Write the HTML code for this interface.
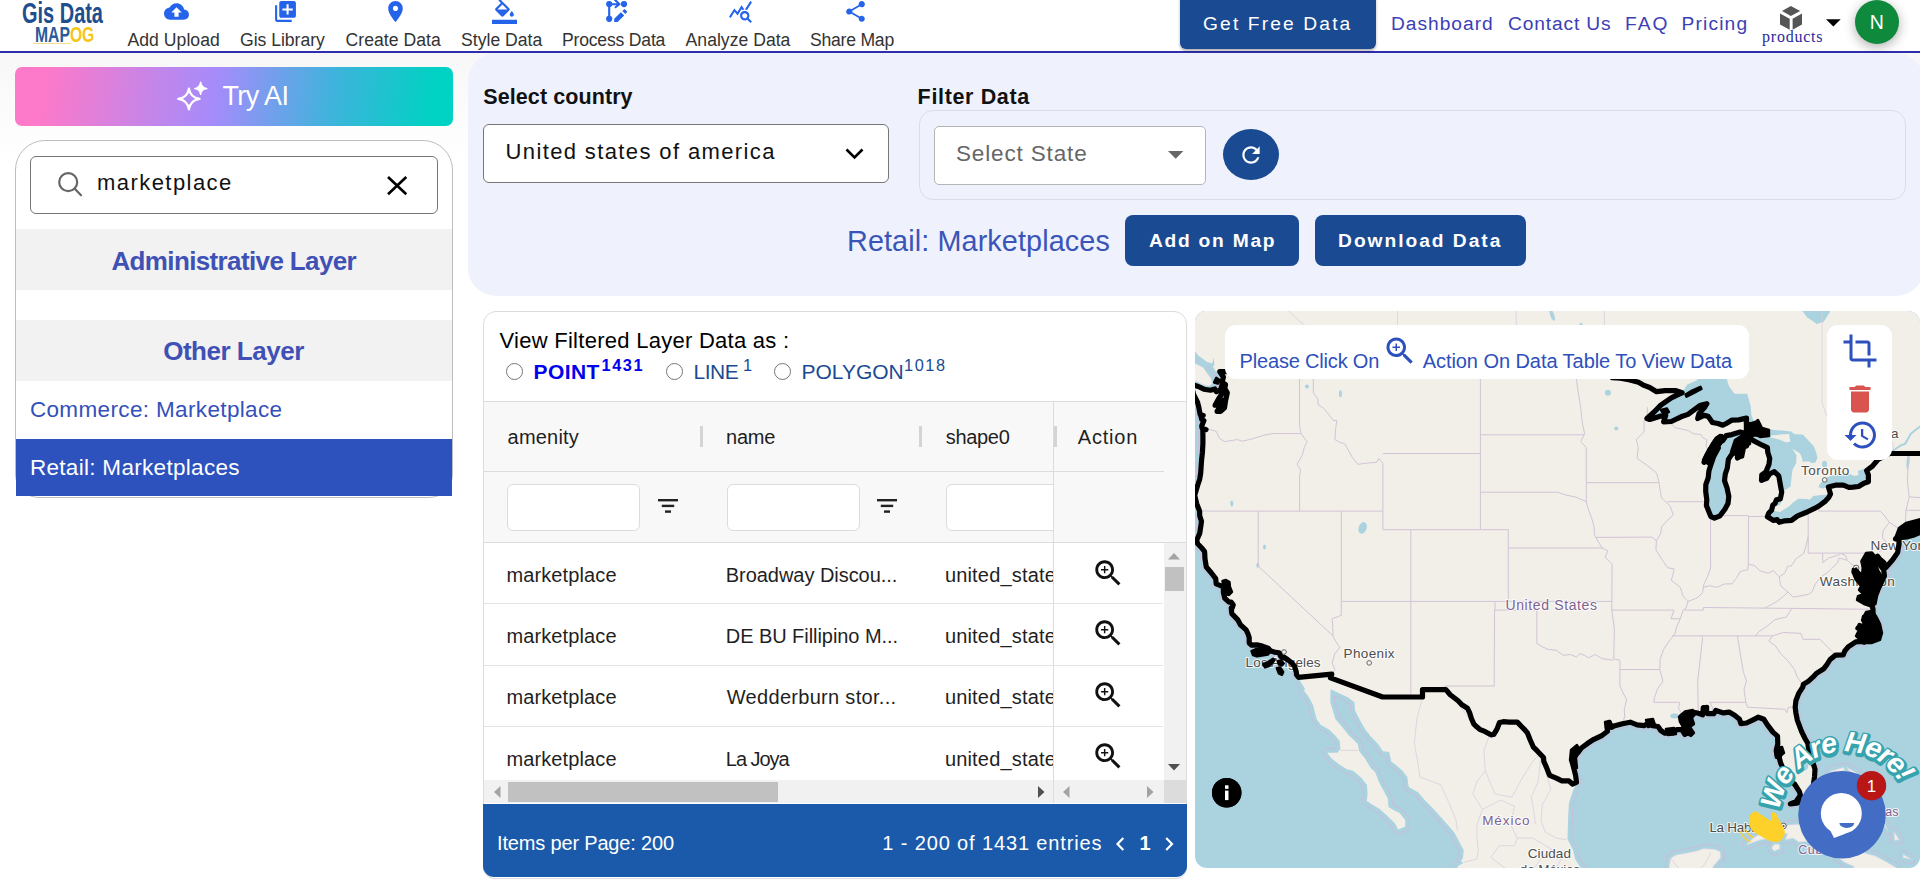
<!DOCTYPE html><html><head><meta charset="utf-8"><title>GIS Data</title><style>
html,body{margin:0;padding:0;background:#fff;}
#pgbg{position:absolute;left:0;top:53px;width:1920px;height:110px;background:linear-gradient(180deg,#f7f7f8 0%,#fbfbfb 45%,#fff 100%)}
body{width:1920px;height:886px;overflow:hidden;position:relative;font-family:"Liberation Sans",sans-serif;}
.t{position:absolute;white-space:nowrap;line-height:1;}
.ic{position:absolute;display:block;overflow:visible}
#hdr{position:absolute;left:0;top:0;width:1920px;height:51px;background:#fff}
#hline{position:absolute;left:0;top:51px;width:1920px;height:2px;background:#2e2fae}
.logo1{position:absolute;left:22.4px;top:-1.3px;font:bold 28.6px/28.6px "Liberation Sans",sans-serif;color:#1f4e8f;transform-origin:0 0;transform:scaleX(.698);white-space:nowrap}
.logo2{position:absolute;left:35.3px;top:24.2px;font:bold 21.6px/21.6px "Liberation Sans",sans-serif;color:#2a5a9a;transform-origin:0 0;transform:scaleX(.727);white-space:nowrap}
.logo2 b{color:#f5c518}
.logoline{position:absolute;left:33px;top:43px;width:38px;height:1px;background:#f3dc8a}
.btn{position:absolute;background:#1a4b92}
.avatar{position:absolute;left:1855px;top:-0.5px;width:44px;height:44px;border-radius:50%;background:#0f8a3c;box-shadow:0 3px 12px rgba(0,0,0,.32)}
.tryai{position:absolute;left:15px;top:67px;width:438px;height:59px;border-radius:7px;background:linear-gradient(97deg,#fd79c9 0%,#fd79c9 7%,#a48cfb 46%,#3fb3dc 72%,#00d2c3 95%,#00d2c3 100%)}
.side{position:absolute;left:15px;top:140px;width:436px;height:355.5px;border:1px solid #bdbdbd;border-radius:30px 30px 24px 24px;background:#fff;overflow:hidden}
.srch{position:absolute;left:14px;top:15px;width:406px;height:56px;border:1px solid #767676;border-radius:6px}
.band{position:absolute;left:0;width:436px;background:#f2f2f2}
.sel{position:absolute;width:436px;background:#2d52be}
.fpanel{position:absolute;left:468px;top:53px;width:1456px;height:243px;border-radius:28px;background:#eff2fc}
.selbox{position:absolute;left:483px;top:124px;width:404px;height:57px;border:1px solid #767676;border-radius:6px;background:#fff}
.fbox{position:absolute;left:919px;top:110px;width:985px;height:88px;border:1px solid #dcdde6;border-radius:14px}
.stbox{position:absolute;left:934px;top:125.5px;width:270px;height:57px;border:1px solid #b5b5b5;border-radius:5px;background:#fff}
.rbtn{position:absolute;left:1223px;top:129px;width:56px;height:51px;border-radius:50%;background:#1a4b92}
.tpanel{position:absolute;left:483px;top:311px;width:702px;height:566px;border:1px solid #dcdcdc;border-radius:13px 13px 11px 11px;background:#fff;overflow:hidden}
.hl{position:absolute;height:1px;background:#dcdcdc}
.radio{position:absolute;width:15px;height:15px;border:1.3px solid #767676;border-radius:50%;background:#fff}
</style></head><body><div id="pgbg"></div><div id="hdr"></div><div id="hline"></div>
<div class="logo1">Gis Data</div><div class="logo2">MAP<b>OG</b></div><div class="logoline"></div>
<svg class="ic" style="left:164px;top:-1.2px" width="25" height="25" viewBox="0 0 24 24" fill="#2563eb" ><path d="M19.35 10.04C18.67 6.59 15.64 4 12 4 9.11 4 6.6 5.64 5.35 8.04 2.34 8.36 0 10.91 0 14c0 3.31 2.69 6 6 6h13c2.76 0 5-2.24 5-5 0-2.64-2.05-4.78-4.65-4.96zM14 13v4h-4v-4H7l5-5 5 5h-3z"/></svg>
<svg class="ic" style="left:272.9px;top:-1.2px" width="25" height="25" viewBox="0 0 24 24" fill="#2563eb" ><path d="M4 6H2v14c0 1.1.9 2 2 2h14v-2H4V6zm16-4H8c-1.1 0-2 .9-2 2v12c0 1.1.9 2 2 2h12c1.1 0 2-.9 2-2V4c0-1.1-.9-2-2-2zm-1 9h-4v4h-2v-4H9V9h4V5h2v4h4v2z"/></svg>
<svg class="ic" style="left:382.8px;top:-1.2px" width="25" height="25" viewBox="0 0 24 24" fill="#2563eb" ><path d="M12 2C8.13 2 5 5.13 5 9c0 5.25 7 13 7 13s7-7.75 7-13c0-3.87-3.13-7-7-7zm0 9.5c-1.38 0-2.5-1.12-2.5-2.5s1.12-2.5 2.5-2.5 2.5 1.12 2.5 2.5-1.12 2.5-2.5 2.5z"/></svg>
<svg class="ic" style="left:492px;top:-1.2px" width="25" height="25" viewBox="0 0 24 24" fill="#2563eb" ><path d="M16.56 8.94L7.62 0 6.21 1.41l2.38 2.38-5.15 5.15c-.59.59-.59 1.54 0 2.12l5.5 5.5c.29.29.68.44 1.06.44s.77-.15 1.06-.44l5.5-5.5c.59-.58.59-1.53 0-2.12zM5.21 10L10 5.21 14.79 10H5.21zM19 11.5s-2 2.17-2 3.5c0 1.1.9 2 2 2s2-.9 2-2c0-1.33-2-3.5-2-3.5zM0 20h24v4H0z"/></svg>
<svg class="ic" style="left:596px;top:-2px" width="40" height="28" viewBox="596 -2 40 28" fill="#2563eb"><circle cx="609.2" cy="4.1" r="3.1"/><circle cx="624" cy="4.1" r="3.1"/><circle cx="609.2" cy="18.8" r="3.1"/><path d="M609.2 4.1V18.8M609.2 4.2H618.6M614.6 -0.6L619.4 4.2L614.9 7.8" fill="none" stroke="#2563eb" stroke-width="2.1"/><path d="M614.2 21.9V18.8L620.9 12.2L624.2 15.4L617.6 21.9Z"/><path d="M622.3 11.0L624.6 8.9L627.3 11.7L625.3 14.0Z"/></svg>

<svg class="ic" style="left:728.4px;top:-1.2px" width="25" height="25" viewBox="0 0 24 24" fill="#2563eb" ><path d="M19.88 18.47c.44-.7.7-1.51.7-2.39 0-2.49-2.01-4.5-4.5-4.5s-4.5 2.01-4.5 4.5 2.01 4.5 4.49 4.5c.88 0 1.7-.26 2.39-.7L21.58 23 23 21.58l-3.12-3.11zm-3.8.11c-1.38 0-2.5-1.12-2.5-2.5s1.12-2.5 2.5-2.5 2.5 1.12 2.5 2.5-1.12 2.5-2.5 2.5zm-.36-8.5c-.74.02-1.45.18-2.1.45l-.55-.83-3.8 6.18-3.01-3.52-3.63 5.81L1 17l5-8 3 3.5L13 6l2.72 4.08zm2.59.5c-.64-.28-1.33-.45-2.05-.49L21.38 2 23 3.18l-4.69 7.4z"/></svg>
<svg class="ic" style="left:842.5px;top:-1.2px" width="25" height="25" viewBox="0 0 24 24" fill="#2563eb" ><path d="M18 16.08c-.76 0-1.44.3-1.96.77L8.91 12.7c.05-.23.09-.46.09-.7s-.04-.47-.09-.7l7.05-4.11c.54.5 1.25.81 2.04.81 1.66 0 3-1.34 3-3s-1.34-3-3-3-3 1.34-3 3c0 .24.04.47.09.7L8.04 9.81C7.5 9.31 6.79 9 6 9c-1.66 0-3 1.34-3 3s1.34 3 3 3c.79 0 1.5-.31 2.04-.81l7.12 4.16c-.05.21-.08.43-.08.65 0 1.61 1.31 2.92 2.92 2.92 1.61 0 2.92-1.31 2.92-2.92s-1.31-2.92-2.92-2.92z"/></svg>
<span class="t" style="left:127.50px;top:31.90px;font-size:17.6px;color:#333333;font-weight:normal;font-family:'Liberation Sans', sans-serif;letter-spacing:0.038px;">Add Upload</span>
<span class="t" style="left:240.00px;top:31.90px;font-size:17.6px;color:#333333;font-weight:normal;font-family:'Liberation Sans', sans-serif;letter-spacing:-0.026px;">Gis Library</span>
<span class="t" style="left:345.60px;top:31.90px;font-size:17.6px;color:#333333;font-weight:normal;font-family:'Liberation Sans', sans-serif;letter-spacing:0.033px;">Create Data</span>
<span class="t" style="left:461.00px;top:31.90px;font-size:17.6px;color:#333333;font-weight:normal;font-family:'Liberation Sans', sans-serif;letter-spacing:0.013px;">Style Data</span>
<span class="t" style="left:562.00px;top:31.90px;font-size:17.6px;color:#333333;font-weight:normal;font-family:'Liberation Sans', sans-serif;letter-spacing:-0.202px;">Process Data</span>
<span class="t" style="left:685.60px;top:31.90px;font-size:17.6px;color:#333333;font-weight:normal;font-family:'Liberation Sans', sans-serif;letter-spacing:0.013px;">Analyze Data</span>
<span class="t" style="left:810.00px;top:31.90px;font-size:17.6px;color:#333333;font-weight:normal;font-family:'Liberation Sans', sans-serif;letter-spacing:-0.235px;">Share Map</span>
<div class="btn" style="left:1180px;top:-6px;width:196px;height:55px;border-radius:6px;box-shadow:0 2px 3px rgba(0,0,0,.3)"></div>
<span class="t" style="left:1203.00px;top:13.75px;font-size:19.2px;color:#fff;font-weight:normal;font-family:'Liberation Sans', sans-serif;letter-spacing:2.142px;">Get Free Data</span>
<span class="t" style="left:1391.00px;top:13.75px;font-size:19.2px;color:#3b40b5;font-weight:normal;font-family:'Liberation Sans', sans-serif;letter-spacing:0.976px;">Dashboard</span>
<span class="t" style="left:1508.00px;top:13.75px;font-size:19.2px;color:#3b40b5;font-weight:normal;font-family:'Liberation Sans', sans-serif;letter-spacing:0.854px;">Contact Us</span>
<span class="t" style="left:1625.00px;top:13.75px;font-size:19.2px;color:#3b40b5;font-weight:normal;font-family:'Liberation Sans', sans-serif;letter-spacing:2.020px;">FAQ</span>
<span class="t" style="left:1681.60px;top:13.75px;font-size:19.2px;color:#3b40b5;font-weight:normal;font-family:'Liberation Sans', sans-serif;letter-spacing:1.137px;">Pricing</span>
<svg class="ic" style="left:1778px;top:4px" width="26" height="28" viewBox="1778 4 26 28" fill="#555"><path d="M1790.8 5.9L1800.2 10.9L1790.8 15.9L1782 10.9Z"/><path d="M1780 13.4L1789.7 18.8V29.7L1780 24.4Z"/><path d="M1792.6 18.8L1802 13.4V24.4L1792.6 29.7Z"/></svg>

<span class="t" style="left:1762.00px;top:29.40px;font-size:16px;color:#2a2a9c;font-weight:normal;font-family:'Liberation Serif', serif;letter-spacing:0.775px;">products</span>
<svg class="ic" style="left:1826px;top:19.1px" width="14.7" height="7.9" viewBox="0 0 10 5"><path d="M0 0h10L5 5z" fill="#000"/></svg>
<div class="avatar"></div>
<span class="t" style="left:1869.70px;top:13.39px;font-size:19.5px;color:#fff;font-weight:normal;font-family:'Liberation Sans', sans-serif;letter-spacing:0.000px;">N</span>
<div class="tryai"></div>
<svg class="ic" style="left:174px;top:78px" width="40" height="36" viewBox="174 78 40 36"><path d="M188.900 88.600 Q190.300 97.600 199.600 98.900 Q190.300 100.300 188.900 109.400 Q187.600 100.300 178.300 98.900 Q187.600 97.600 188.900 88.600Z" fill="none" stroke="#fff" stroke-width="2.3" stroke-linejoin="round"/><path d="M200.600 82.100 Q201.300 87.900 206.900 88.600 Q201.300 89.300 200.600 94.300 Q199.900 89.300 194.700 88.600 Q199.900 87.900 200.600 82.100Z" fill="#fff" stroke="#fff" stroke-width="1.4" stroke-linejoin="round"/></svg>

<span class="t" style="left:222.50px;top:83.04px;font-size:27px;color:#fff;font-weight:normal;font-family:'Liberation Sans', sans-serif;letter-spacing:-0.618px;">Try AI</span>
<div class="side"><div class="srch"></div><div class="band" style="top:88px;height:61px"></div><div class="band" style="top:179px;height:60.5px"></div></div><div class="sel" style="left:16px;top:439px;height:57px"></div>
<svg class="ic" style="left:56px;top:170px" width="28" height="28" viewBox="0 0 28 28" fill="none" stroke="#666" stroke-width="2.2"><circle cx="12.2" cy="12.2" r="9"/><path d="M18.8 18.8L25 25.3" stroke-linecap="round"/></svg>
<span class="t" style="left:97.00px;top:171.98px;font-size:22px;color:#111;font-weight:normal;font-family:'Liberation Sans', sans-serif;letter-spacing:1.441px;">marketplace</span>
<svg class="ic" style="left:386.7px;top:176px" width="20.3" height="19.3" viewBox="0 0 20 19" fill="none" stroke="#000" stroke-width="2.6"><path d="M1 1L19 18M19 1L1 18"/></svg>
<span class="t" style="left:111.40px;top:247.79px;font-size:26px;color:#3f51b5;font-weight:bold;font-family:'Liberation Sans', sans-serif;letter-spacing:-0.626px;">Administrative Layer</span>
<span class="t" style="left:163.20px;top:337.79px;font-size:26px;color:#3f51b5;font-weight:bold;font-family:'Liberation Sans', sans-serif;letter-spacing:-0.483px;">Other Layer</span>
<span class="t" style="left:29.90px;top:398.55px;font-size:22.5px;color:#3350bb;font-weight:normal;font-family:'Liberation Sans', sans-serif;letter-spacing:0.357px;">Commerce: Marketplace</span>
<span class="t" style="left:29.90px;top:457.45px;font-size:22.5px;color:#fff;font-weight:normal;font-family:'Liberation Sans', sans-serif;letter-spacing:0.306px;">Retail: Marketplaces</span>
<div class="fpanel"></div>
<span class="t" style="left:483.30px;top:86.60px;font-size:21.5px;color:#111;font-weight:bold;font-family:'Liberation Sans', sans-serif;letter-spacing:0.084px;">Select country</span>
<span class="t" style="left:917.60px;top:86.60px;font-size:21.5px;color:#111;font-weight:bold;font-family:'Liberation Sans', sans-serif;letter-spacing:0.652px;">Filter Data</span>
<div class="selbox"></div>
<span class="t" style="left:505.50px;top:141.08px;font-size:22px;color:#111;font-weight:normal;font-family:'Liberation Sans', sans-serif;letter-spacing:1.379px;">United states of america</span>
<svg class="ic" style="left:845px;top:148px" width="19" height="12" viewBox="0 0 19 12" fill="none" stroke="#000" stroke-width="2.6"><path d="M1.5 1.5L9.5 9.5L17.5 1.5"/></svg>
<div class="fbox"></div><div class="stbox"></div>
<span class="t" style="left:956.00px;top:142.75px;font-size:22.5px;color:#666;font-weight:normal;font-family:'Liberation Sans', sans-serif;letter-spacing:0.854px;">Select State</span>
<svg class="ic" style="left:1168.3px;top:151px" width="15.4" height="7.7" viewBox="0 0 10 5"><path d="M0 0h10L5 5z" fill="#666"/></svg>
<div class="rbtn"></div>
<svg class="ic" style="left:1238px;top:141.5px" width="26" height="26" viewBox="0 0 24 24" fill="#fff" ><path d="M17.65 6.35C16.2 4.9 14.21 4 12 4c-4.42 0-7.99 3.58-7.99 8s3.57 8 7.99 8c3.73 0 6.84-2.55 7.73-6h-2.08c-.82 2.33-3.04 4-5.65 4-3.31 0-6-2.69-6-6s2.69-6 6-6c1.66 0 3.14.69 4.22 1.78L13 11h7V4l-2.35 2.35z"/></svg>
<span class="t" style="left:847.00px;top:227.22px;font-size:28.8px;color:#3a55b8;font-weight:normal;font-family:'Liberation Sans', sans-serif;letter-spacing:0.101px;">Retail: Marketplaces</span>
<div class="btn" style="left:1125px;top:215px;width:174px;height:51px;border-radius:8px"></div>
<span class="t" style="left:1149.00px;top:231.45px;font-size:19.2px;color:#fff;font-weight:bold;font-family:'Liberation Sans', sans-serif;letter-spacing:1.749px;">Add on Map</span>
<div class="btn" style="left:1315px;top:215px;width:211px;height:51px;border-radius:8px"></div>
<span class="t" style="left:1338.10px;top:231.45px;font-size:19.2px;color:#fff;font-weight:bold;font-family:'Liberation Sans', sans-serif;letter-spacing:1.974px;">Download Data</span>
<div class="tpanel"></div>
<span class="t" style="left:499.50px;top:330.13px;font-size:22px;color:#000;font-weight:normal;font-family:'Liberation Sans', sans-serif;letter-spacing:0.270px;">View Filtered Layer Data as :</span>
<div class="radio" style="left:506.25px;top:362.5px"></div>
<div class="radio" style="left:665.5px;top:362.5px"></div>
<div class="radio" style="left:773.5px;top:362.5px"></div>
<span class="t" style="left:533.50px;top:360.97px;font-size:21px;color:#0000ee;font-weight:bold;font-family:'Liberation Sans', sans-serif;letter-spacing:0.415px;">POINT</span>
<span class="t" style="left:601.50px;top:357.45px;font-size:16.3px;color:#0000ee;font-weight:bold;font-family:'Liberation Sans', sans-serif;letter-spacing:1.612px;">1431</span>
<span class="t" style="left:693.50px;top:360.97px;font-size:21px;color:#1a4b92;font-weight:normal;font-family:'Liberation Sans', sans-serif;letter-spacing:-0.476px;">LINE</span>
<span class="t" style="left:743.00px;top:357.45px;font-size:16.3px;color:#1a4b92;font-weight:normal;font-family:'Liberation Sans', sans-serif;letter-spacing:0.000px;">1</span>
<span class="t" style="left:801.50px;top:360.97px;font-size:21px;color:#1a4b92;font-weight:normal;font-family:'Liberation Sans', sans-serif;letter-spacing:-0.023px;">POLYGON</span>
<span class="t" style="left:904.00px;top:357.45px;font-size:16.3px;color:#1a4b92;font-weight:normal;font-family:'Liberation Sans', sans-serif;letter-spacing:1.612px;">1018</span>
<div style="position:absolute;left:484px;top:400.5px;width:702px;height:142px;background:#f8f8f8"></div>
<div class="hl" style="left:484px;top:400.5px;width:702px"></div>
<div class="hl" style="left:484px;top:471px;width:680px"></div>
<div class="hl" style="left:484px;top:542px;width:702px"></div>
<div style="position:absolute;left:700px;top:426px;width:2.6px;height:20.5px;background:#d4d4d4"></div>
<div style="position:absolute;left:919.3px;top:426px;width:2.6px;height:20.5px;background:#d4d4d4"></div>
<div style="position:absolute;left:1054px;top:426px;width:3px;height:20.5px;background:#d4d4d4"></div>
<span class="t" style="left:507.60px;top:427.07px;font-size:20px;color:#1f1f1f;font-weight:normal;font-family:'Liberation Sans', sans-serif;letter-spacing:0.195px;">amenity</span>
<span class="t" style="left:726.10px;top:427.07px;font-size:20px;color:#1f1f1f;font-weight:normal;font-family:'Liberation Sans', sans-serif;letter-spacing:-0.235px;">name</span>
<span class="t" style="left:945.70px;top:427.07px;font-size:20px;color:#1f1f1f;font-weight:normal;font-family:'Liberation Sans', sans-serif;letter-spacing:-0.298px;">shape0</span>
<span class="t" style="left:1077.80px;top:427.07px;font-size:20px;color:#1f1f1f;font-weight:normal;font-family:'Liberation Sans', sans-serif;letter-spacing:0.787px;">Action</span>
<div style="position:absolute;left:507px;top:484px;width:131px;height:44.5px;border:1px solid #dcdcdc;border-radius:6px;background:#fff"></div>
<div style="position:absolute;left:726.5px;top:484px;width:131px;height:44.5px;border:1px solid #dcdcdc;border-radius:6px;background:#fff"></div>
<div style="position:absolute;left:946px;top:484px;width:120px;height:44.5px;border:1px solid #dcdcdc;border-radius:6px;background:#fff"></div>
<div style="position:absolute;left:1053px;top:472px;width:133px;height:70px;background:#f8f8f8"></div>
<svg class="ic" style="left:658px;top:498.8px" width="20" height="14" viewBox="0 0 20 14" fill="#222"><rect x="0" y="0" width="20" height="2.4"/><rect x="3.8" y="5.7" width="12.4" height="2.4"/><rect x="7" y="11.4" width="6" height="2.4"/></svg>
<svg class="ic" style="left:877px;top:498.8px" width="20" height="14" viewBox="0 0 20 14" fill="#222"><rect x="0" y="0" width="20" height="2.4"/><rect x="3.8" y="5.7" width="12.4" height="2.4"/><rect x="7" y="11.4" width="6" height="2.4"/></svg>
<span class="t" style="left:506.40px;top:565.07px;font-size:20px;color:#1f1f1f;font-weight:normal;font-family:'Liberation Sans', sans-serif;letter-spacing:0.129px;">marketplace</span>
<span class="t" style="left:725.80px;top:565.07px;font-size:20px;color:#1f1f1f;font-weight:normal;font-family:'Liberation Sans', sans-serif;letter-spacing:-0.043px;">Broadway Discou...</span>
<span class="t" style="left:944.90px;top:565.07px;font-size:20px;color:#1f1f1f;font-weight:normal;font-family:'Liberation Sans', sans-serif;letter-spacing:0.177px;">united_states</span>
<div class="hl" style="left:484px;top:603px;width:679px;background:#e4e4e4"></div>
<span class="t" style="left:506.40px;top:625.57px;font-size:20px;color:#1f1f1f;font-weight:normal;font-family:'Liberation Sans', sans-serif;letter-spacing:0.129px;">marketplace</span>
<span class="t" style="left:725.80px;top:625.57px;font-size:20px;color:#1f1f1f;font-weight:normal;font-family:'Liberation Sans', sans-serif;letter-spacing:-0.059px;">DE BU Fillipino M...</span>
<span class="t" style="left:944.90px;top:625.57px;font-size:20px;color:#1f1f1f;font-weight:normal;font-family:'Liberation Sans', sans-serif;letter-spacing:0.177px;">united_states</span>
<div class="hl" style="left:484px;top:664.5px;width:679px;background:#e4e4e4"></div>
<span class="t" style="left:506.40px;top:687.07px;font-size:20px;color:#1f1f1f;font-weight:normal;font-family:'Liberation Sans', sans-serif;letter-spacing:0.129px;">marketplace</span>
<span class="t" style="left:726.80px;top:687.07px;font-size:20px;color:#1f1f1f;font-weight:normal;font-family:'Liberation Sans', sans-serif;letter-spacing:0.300px;">Wedderburn stor...</span>
<span class="t" style="left:944.90px;top:687.07px;font-size:20px;color:#1f1f1f;font-weight:normal;font-family:'Liberation Sans', sans-serif;letter-spacing:0.177px;">united_states</span>
<div class="hl" style="left:484px;top:726px;width:679px;background:#e4e4e4"></div>
<span class="t" style="left:506.40px;top:748.57px;font-size:20px;color:#1f1f1f;font-weight:normal;font-family:'Liberation Sans', sans-serif;letter-spacing:0.129px;">marketplace</span>
<span class="t" style="left:725.80px;top:748.57px;font-size:20px;color:#1f1f1f;font-weight:normal;font-family:'Liberation Sans', sans-serif;letter-spacing:-1.038px;">La Joya</span>
<span class="t" style="left:944.90px;top:748.57px;font-size:20px;color:#1f1f1f;font-weight:normal;font-family:'Liberation Sans', sans-serif;letter-spacing:0.177px;">united_states</span>
<div style="position:absolute;left:1053px;top:543px;width:110px;height:237px;background:#fff;border-left:1px solid #dcdcdc"></div>
<div style="position:absolute;left:1053px;top:401px;width:1px;height:402px;background:#dcdcdc"></div>
<svg class="ic" style="left:1090.7px;top:555.7px" width="34.5" height="34.5" viewBox="0 0 24 24" fill="#111" ><path d="M15.5 14h-.79l-.28-.27C15.41 12.59 16 11.11 16 9.5 16 5.91 13.09 3 9.5 3S3 5.91 3 9.5 5.91 16 9.5 16c1.61 0 3.09-.59 4.23-1.57l.27.28v.79l5 4.99L20.49 19l-4.99-5zm-6 0C7.01 14 5 11.99 5 9.5S7.01 5 9.5 5 14 7.01 14 9.5 11.99 14 9.5 14zM12 10h-2v2H9v-2H7V9h2V7h1v2h2v1z"/></svg>
<div class="hl" style="left:1054px;top:603px;width:109px;background:#e4e4e4"></div>
<svg class="ic" style="left:1090.7px;top:616.2px" width="34.5" height="34.5" viewBox="0 0 24 24" fill="#111" ><path d="M15.5 14h-.79l-.28-.27C15.41 12.59 16 11.11 16 9.5 16 5.91 13.09 3 9.5 3S3 5.91 3 9.5 5.91 16 9.5 16c1.61 0 3.09-.59 4.23-1.57l.27.28v.79l5 4.99L20.49 19l-4.99-5zm-6 0C7.01 14 5 11.99 5 9.5S7.01 5 9.5 5 14 7.01 14 9.5 11.99 14 9.5 14zM12 10h-2v2H9v-2H7V9h2V7h1v2h2v1z"/></svg>
<div class="hl" style="left:1054px;top:664.5px;width:109px;background:#e4e4e4"></div>
<svg class="ic" style="left:1090.7px;top:677.7px" width="34.5" height="34.5" viewBox="0 0 24 24" fill="#111" ><path d="M15.5 14h-.79l-.28-.27C15.41 12.59 16 11.11 16 9.5 16 5.91 13.09 3 9.5 3S3 5.91 3 9.5 5.91 16 9.5 16c1.61 0 3.09-.59 4.23-1.57l.27.28v.79l5 4.99L20.49 19l-4.99-5zm-6 0C7.01 14 5 11.99 5 9.5S7.01 5 9.5 5 14 7.01 14 9.5 11.99 14 9.5 14zM12 10h-2v2H9v-2H7V9h2V7h1v2h2v1z"/></svg>
<div class="hl" style="left:1054px;top:726px;width:109px;background:#e4e4e4"></div>
<svg class="ic" style="left:1090.7px;top:739.2px" width="34.5" height="34.5" viewBox="0 0 24 24" fill="#111" ><path d="M15.5 14h-.79l-.28-.27C15.41 12.59 16 11.11 16 9.5 16 5.91 13.09 3 9.5 3S3 5.91 3 9.5 5.91 16 9.5 16c1.61 0 3.09-.59 4.23-1.57l.27.28v.79l5 4.99L20.49 19l-4.99-5zm-6 0C7.01 14 5 11.99 5 9.5S7.01 5 9.5 5 14 7.01 14 9.5 11.99 14 9.5 14zM12 10h-2v2H9v-2H7V9h2V7h1v2h2v1z"/></svg>
<div style="position:absolute;left:1163.5px;top:543px;width:22.5px;height:237.5px;background:#f1f1f1"></div>
<div style="position:absolute;left:1165px;top:567px;width:19px;height:23.5px;background:#c1c1c1"></div>
<svg class="ic" style="left:1168px;top:552.5px" width="12" height="6.5" viewBox="0 0 12 6.5"><path d="M0 6.5L6 0L12 6.5z" fill="#a3a3a3"/></svg>
<svg class="ic" style="left:1168px;top:763.5px" width="12" height="6.5" viewBox="0 0 12 6.5"><path d="M0 0L6 6.5L12 0z" fill="#505050"/></svg>
<div style="position:absolute;left:484px;top:780.3px;width:702px;height:23.2px;background:#f1f1f1"></div>
<div style="position:absolute;left:1163.5px;top:780.3px;width:22.5px;height:23.2px;background:#dcdcdc"></div>
<div style="position:absolute;left:1053px;top:780.3px;width:1px;height:23.2px;background:#dcdcdc"></div>
<div style="position:absolute;left:508px;top:782px;width:270px;height:19.5px;background:#c1c1c1"></div>
<svg class="ic" style="left:493.5px;top:785.5px" width="6.5" height="12" viewBox="0 0 6.5 12"><path d="M6.5 0L0 6L6.5 12z" fill="#a3a3a3"/></svg>
<svg class="ic" style="left:1037.5px;top:785.5px" width="6.5" height="12" viewBox="0 0 6.5 12"><path d="M0 0L6.5 6L0 12z" fill="#505050"/></svg>
<svg class="ic" style="left:1063px;top:785.5px" width="6.5" height="12" viewBox="0 0 6.5 12"><path d="M6.5 0L0 6L6.5 12z" fill="#a3a3a3"/></svg>
<svg class="ic" style="left:1146.5px;top:785.5px" width="6.5" height="12" viewBox="0 0 6.5 12"><path d="M0 0L6.5 6L0 12z" fill="#a3a3a3"/></svg>
<div style="position:absolute;left:483px;top:803.5px;width:704px;height:73.5px;background:#1b5aaa;border-radius:0 0 11px 11px"></div>
<span class="t" style="left:497.10px;top:832.67px;font-size:20px;color:#fff;font-weight:normal;font-family:'Liberation Sans', sans-serif;letter-spacing:-0.177px;">Items per Page: 200</span>
<span class="t" style="left:882.30px;top:832.67px;font-size:20px;color:#fff;font-weight:normal;font-family:'Liberation Sans', sans-serif;letter-spacing:0.871px;">1 - 200 of 1431 entries</span>
<svg class="ic" style="left:1115.5px;top:837px" width="8.5" height="14" viewBox="0 0 8.5 14" fill="none" stroke="#fff" stroke-width="2.2"><path d="M7.3 1L1.5 7L7.3 13"/></svg>
<span class="t" style="left:1139.50px;top:832.67px;font-size:20px;color:#fff;font-weight:bold;font-family:'Liberation Sans', sans-serif;letter-spacing:0.000px;">1</span>
<svg class="ic" style="left:1164.5px;top:837px" width="8.5" height="14" viewBox="0 0 8.5 14" fill="none" stroke="#fff" stroke-width="2.2"><path d="M1.2 1L7 7L1.2 13"/></svg>
<svg class="ic" id="map" style="left:1195px;top:311px;border-radius:11px 12px 11px 12px;overflow:hidden" width="725" height="557" viewBox="0 0 725 557">
<rect width="725" height="557" fill="#aad3df"/>
<path d="M-34.3 -27.9 L-34.3 32.8 L-6.4 37.1 L-0.8 39.3 L3.3 44.7 L8.2 47.9 L11.7 51.1 L17.3 52.2 L18.7 46.8 L19.4 53.7 L18.0 55.4 L20.1 59.7 L24.8 60.7 L28.4 66.0 L27.0 71.3 L30.5 73.4 L29.8 77.6 L32.3 81.8 L30.5 90.0 L29.5 96.8 L25.6 100.3 L22.1 100.3 L24.9 96.2 L27.7 91.1 L22.1 94.2 L20.1 94.2 L23.5 88.0 L27.0 82.8 L24.8 79.2 L21.4 80.7 L19.8 78.0 L15.5 79.2 L8.9 78.2 L3.3 75.5 L-2.5 73.8 L-2.7 78.2 L-1.3 83.8 L2.5 91.1 L3.8 96.2 L5.1 103.4 L8.2 104.4 L5.8 104.8 L6.8 108.5 L8.9 109.5 L6.7 115.0 L7.1 117.2 L11.0 118.6 L7.8 119.0 L7.9 124.6 L7.9 132.6 L7.4 141.5 L6.5 149.9 L5.7 162.0 L4.7 168.2 L2.6 174.5 L-0.3 184.3 L1.7 192.6 L4.6 200.1 L4.7 204.8 L6.5 210.4 L5.4 217.8 L4.7 222.4 L1.8 229.0 L2.5 232.5 L6.5 236.7 L9.6 240.7 L10.0 247.9 L11.3 256.0 L16.6 262.2 L20.7 267.6 L21.2 272.9 L25.6 274.7 L28.7 276.1 L29.8 273.8 L31.2 279.9 L28.4 276.8 L28.4 281.7 L29.8 287.3 L34.0 291.1 L36.1 291.1 L38.2 293.9 L37.0 297.4 L36.2 296.9 L36.8 302.6 L42.6 308.6 L45.4 313.8 L51.1 318.9 L52.8 322.3 L54.2 326.6 L54.2 332.0 L56.7 334.2 L61.8 333.9 L67.4 335.1 L73.0 337.1 L75.8 340.1 L79.3 341.1 L84.1 341.8 L85.5 345.1 L86.9 346.5 L89.0 346.2 L92.5 348.5 L96.7 351.8 L99.5 355.2 L101.3 361.0 L101.5 363.8 L103.4 366.3 L106.1 371.7 L109.9 377.5 L109.2 379.9 L114.1 386.5 L118.3 394.6 L119.7 401.1 L121.7 408.3 L125.9 413.9 L134.3 418.7 L139.9 424.3 L144.7 429.9 L145.4 437.8 L142.6 441.7 L132.2 441.7 L136.4 447.2 L143.3 452.7 L151.7 458.2 L158.0 459.8 L166.3 466.8 L171.9 473.7 L172.6 483.0 L171.9 489.9 L177.5 493.7 L185.1 498.3 L193.5 506.0 L199.7 512.0 L203.2 518.4 L210.2 515.8 L210.2 509.0 L204.6 502.1 L198.4 499.1 L193.5 496.0 L192.8 487.6 L187.9 478.4 L183.7 470.6 L180.2 461.3 L175.4 456.6 L169.8 447.2 L164.2 440.2 L162.8 433.0 L153.8 424.3 L146.8 415.5 L140.5 408.3 L137.8 399.5 L135.4 391.3 L135.4 383.2 L135.7 378.3 L142.6 381.6 L153.1 386.5 L159.4 391.3 L160.0 399.5 L164.9 409.1 L170.5 418.7 L175.4 425.1 L183.0 433.0 L187.9 440.2 L194.2 440.9 L196.3 450.4 L203.9 456.6 L208.1 460.5 L212.3 466.0 L213.7 476.1 L223.4 481.5 L229.7 489.1 L237.4 496.8 L247.1 507.5 L252.4 513.5 L259.0 521.1 L263.1 528.6 L268.7 539.2 L268.0 546.6 L265.9 550.4 L268.7 551.8 L262.4 555.6 L266.6 564.5 L272.2 576.3 L397.6 576.3 L392.0 565.9 L385.7 557.0 L380.1 548.1 L378.1 539.2 L372.5 527.9 L372.8 518.1 L373.2 504.4 L373.9 492.2 L377.4 481.5 L381.5 471.3 L380.6 464.4 L378.3 455.1 L379.4 447.2 L379.0 443.8 L382.9 441.7 L386.4 437.0 L392.7 432.3 L398.9 428.3 L407.3 424.3 L412.5 420.3 L412.2 414.7 L414.3 411.5 L416.4 416.3 L419.8 414.7 L427.5 412.7 L435.2 411.2 L442.1 413.9 L449.1 414.7 L454.7 411.1 L457.5 414.7 L463.0 415.5 L465.8 419.5 L470.0 422.2 L478.3 421.9 L481.8 418.7 L486.7 418.4 L489.8 423.5 L495.1 420.7 L489.5 417.1 L488.1 412.3 L490.9 409.1 L486.7 405.1 L490.9 402.7 L496.5 401.4 L502.0 401.9 L507.6 403.8 L508.3 397.0 L512.5 402.7 L518.7 402.7 L520.8 399.5 L528.5 401.9 L534.1 401.1 L539.6 404.3 L544.5 408.3 L545.9 412.7 L551.5 412.0 L559.1 408.3 L563.3 406.2 L568.9 408.3 L572.4 413.9 L577.9 421.1 L582.5 425.1 L582.8 433.0 L581.2 439.4 L582.1 445.7 L585.6 440.9 L584.2 446.5 L585.6 451.9 L589.1 459.8 L592.6 462.9 L595.6 470.6 L599.5 473.0 L604.4 480.7 L605.4 484.2 L600.9 490.7 L595.4 493.0 L601.6 492.2 L607.9 489.9 L613.5 486.1 L614.2 483.3 L615.6 481.5 L618.3 474.5 L619.5 466.0 L620.0 458.2 L618.1 451.9 L614.2 441.7 L612.8 432.3 L610.0 427.5 L606.5 420.3 L602.3 409.1 L600.9 401.9 L600.2 396.2 L600.9 389.7 L603.7 382.4 L607.9 375.8 L608.3 373.4 L613.5 370.1 L619.0 365.1 L621.8 362.1 L628.8 357.7 L632.0 353.5 L635.1 348.5 L640.6 344.1 L648.3 343.8 L649.7 340.1 L653.2 335.9 L660.8 330.8 L667.1 330.3 L668.9 331.3 L672.0 325.7 L665.0 324.9 L669.2 319.8 L662.9 317.2 L672.0 316.4 L681.7 320.6 L683.5 314.6 L681.0 308.6 L669.2 306.1 L678.2 307.8 L678.0 298.3 L676.2 291.7 L670.6 291.3 L667.8 287.0 L671.3 286.1 L669.2 279.9 L672.0 280.8 L670.6 274.7 L671.7 272.9 L661.5 266.7 L660.8 259.6 L666.4 267.6 L671.3 271.1 L669.2 264.0 L669.2 256.0 L667.8 250.6 L675.5 246.1 L673.4 253.3 L672.7 258.7 L672.0 263.1 L676.2 269.3 L679.6 273.8 L676.9 280.8 L676.2 288.2 L677.1 287.8 L681.0 280.8 L685.2 273.8 L689.4 264.9 L688.7 258.7 L684.5 253.3 L682.4 245.2 L684.5 247.9 L688.7 251.5 L691.1 256.3 L697.7 248.8 L702.6 241.6 L704.0 233.4 L704.0 228.5 L700.5 227.9 L703.3 225.2 L704.0 223.3 L705.1 220.9 L706.8 222.4 L708.2 219.6 L710.3 218.2 L715.2 215.9 L719.3 214.1 L726.3 213.7 L731.9 213.2 L745.8 212.2 L745.8 -27.9Z M13.8 75.1 L17.3 73.0 L15.9 67.1 L11.7 61.8 L8.2 56.5 L-0.8 52.2 L-4.3 47.9 L-27.3 43.6 L-27.3 69.2 L1.2 70.2 L7.5 73.4 L13.8 75.1Z M471.4 576.3 L472.8 564.5 L474.4 555.6 L475.6 547.4 L481.1 544.1 L492.3 542.1 L502.0 539.9 L509.0 537.7 L520.1 538.4 L525.0 540.6 L525.7 546.6 L518.0 555.6 L516.0 567.4 L514.6 576.3Z M551.5 533.6 L559.1 526.4 L568.9 521.1 L577.3 517.3 L587.0 515.8 L594.0 514.0 L603.7 513.5 L612.1 515.8 L619.7 518.1 L625.3 521.9 L637.2 525.6 L646.9 527.1 L655.3 533.2 L660.8 537.7 L672.0 542.9 L680.3 545.1 L691.5 551.1 L700.5 556.3 L701.2 560.3 L687.3 563.0 L673.4 562.2 L652.5 563.7 L659.4 555.6 L649.0 551.1 L641.3 545.1 L637.8 537.7 L623.2 536.2 L614.9 533.9 L613.5 530.2 L603.7 530.9 L598.1 527.1 L590.5 528.6 L592.6 522.6 L581.4 521.9 L574.5 527.1 L564.7 529.1 L551.5 533.6Z M579.3 533.2 L584.2 533.2 L584.9 537.7 L579.3 539.9 L576.6 536.9 L579.3 533.2Z M648.3 456.6 L649.7 459.0 L640.6 462.1 L635.1 460.5 L639.9 459.0 L648.3 456.6Z M651.8 456.6 L661.5 462.1 L662.2 466.0 L659.4 472.2 L658.0 465.2 L651.8 456.6Z M645.5 483.8 L651.8 490.7 L653.9 498.3 L654.6 504.4 L645.5 498.3 L645.5 483.8Z M666.4 478.4 L674.1 486.1 L673.4 491.4 L671.3 483.0 L666.4 478.4Z M679.6 490.7 L684.5 499.1 L683.1 498.3 L679.6 490.7Z M675.5 506.0 L680.3 509.8 L676.9 509.0 L675.5 506.0Z M685.5 506.7 L690.8 515.1 L692.2 518.8 L688.0 512.0 L685.5 506.7Z M699.1 521.1 L704.0 528.6 L699.8 529.4 L699.1 521.1Z M708.2 543.6 L715.9 548.1 L708.2 546.6 L708.2 543.6Z" fill="none" stroke="#cbbbd8" stroke-width="9.4" stroke-linejoin="round"/>
<path d="M-34.3 -27.9 L-34.3 32.8 L-6.4 37.1 L-0.8 39.3 L3.3 44.7 L8.2 47.9 L11.7 51.1 L17.3 52.2 L18.7 46.8 L19.4 53.7 L18.0 55.4 L20.1 59.7 L24.8 60.7 L28.4 66.0 L27.0 71.3 L30.5 73.4 L29.8 77.6 L32.3 81.8 L30.5 90.0 L29.5 96.8 L25.6 100.3 L22.1 100.3 L24.9 96.2 L27.7 91.1 L22.1 94.2 L20.1 94.2 L23.5 88.0 L27.0 82.8 L24.8 79.2 L21.4 80.7 L19.8 78.0 L15.5 79.2 L8.9 78.2 L3.3 75.5 L-2.5 73.8 L-2.7 78.2 L-1.3 83.8 L2.5 91.1 L3.8 96.2 L5.1 103.4 L8.2 104.4 L5.8 104.8 L6.8 108.5 L8.9 109.5 L6.7 115.0 L7.1 117.2 L11.0 118.6 L7.8 119.0 L7.9 124.6 L7.9 132.6 L7.4 141.5 L6.5 149.9 L5.7 162.0 L4.7 168.2 L2.6 174.5 L-0.3 184.3 L1.7 192.6 L4.6 200.1 L4.7 204.8 L6.5 210.4 L5.4 217.8 L4.7 222.4 L1.8 229.0 L2.5 232.5 L6.5 236.7 L9.6 240.7 L10.0 247.9 L11.3 256.0 L16.6 262.2 L20.7 267.6 L21.2 272.9 L25.6 274.7 L28.7 276.1 L29.8 273.8 L31.2 279.9 L28.4 276.8 L28.4 281.7 L29.8 287.3 L34.0 291.1 L36.1 291.1 L38.2 293.9 L37.0 297.4 L36.2 296.9 L36.8 302.6 L42.6 308.6 L45.4 313.8 L51.1 318.9 L52.8 322.3 L54.2 326.6 L54.2 332.0 L56.7 334.2 L61.8 333.9 L67.4 335.1 L73.0 337.1 L75.8 340.1 L79.3 341.1 L84.1 341.8 L85.5 345.1 L86.9 346.5 L89.0 346.2 L92.5 348.5 L96.7 351.8 L99.5 355.2 L101.3 361.0 L101.5 363.8 L103.4 366.3 L106.1 371.7 L109.9 377.5 L109.2 379.9 L114.1 386.5 L118.3 394.6 L119.7 401.1 L121.7 408.3 L125.9 413.9 L134.3 418.7 L139.9 424.3 L144.7 429.9 L145.4 437.8 L142.6 441.7 L132.2 441.7 L136.4 447.2 L143.3 452.7 L151.7 458.2 L158.0 459.8 L166.3 466.8 L171.9 473.7 L172.6 483.0 L171.9 489.9 L177.5 493.7 L185.1 498.3 L193.5 506.0 L199.7 512.0 L203.2 518.4 L210.2 515.8 L210.2 509.0 L204.6 502.1 L198.4 499.1 L193.5 496.0 L192.8 487.6 L187.9 478.4 L183.7 470.6 L180.2 461.3 L175.4 456.6 L169.8 447.2 L164.2 440.2 L162.8 433.0 L153.8 424.3 L146.8 415.5 L140.5 408.3 L137.8 399.5 L135.4 391.3 L135.4 383.2 L135.7 378.3 L142.6 381.6 L153.1 386.5 L159.4 391.3 L160.0 399.5 L164.9 409.1 L170.5 418.7 L175.4 425.1 L183.0 433.0 L187.9 440.2 L194.2 440.9 L196.3 450.4 L203.9 456.6 L208.1 460.5 L212.3 466.0 L213.7 476.1 L223.4 481.5 L229.7 489.1 L237.4 496.8 L247.1 507.5 L252.4 513.5 L259.0 521.1 L263.1 528.6 L268.7 539.2 L268.0 546.6 L265.9 550.4 L268.7 551.8 L262.4 555.6 L266.6 564.5 L272.2 576.3 L397.6 576.3 L392.0 565.9 L385.7 557.0 L380.1 548.1 L378.1 539.2 L372.5 527.9 L372.8 518.1 L373.2 504.4 L373.9 492.2 L377.4 481.5 L381.5 471.3 L380.6 464.4 L378.3 455.1 L379.4 447.2 L379.0 443.8 L382.9 441.7 L386.4 437.0 L392.7 432.3 L398.9 428.3 L407.3 424.3 L412.5 420.3 L412.2 414.7 L414.3 411.5 L416.4 416.3 L419.8 414.7 L427.5 412.7 L435.2 411.2 L442.1 413.9 L449.1 414.7 L454.7 411.1 L457.5 414.7 L463.0 415.5 L465.8 419.5 L470.0 422.2 L478.3 421.9 L481.8 418.7 L486.7 418.4 L489.8 423.5 L495.1 420.7 L489.5 417.1 L488.1 412.3 L490.9 409.1 L486.7 405.1 L490.9 402.7 L496.5 401.4 L502.0 401.9 L507.6 403.8 L508.3 397.0 L512.5 402.7 L518.7 402.7 L520.8 399.5 L528.5 401.9 L534.1 401.1 L539.6 404.3 L544.5 408.3 L545.9 412.7 L551.5 412.0 L559.1 408.3 L563.3 406.2 L568.9 408.3 L572.4 413.9 L577.9 421.1 L582.5 425.1 L582.8 433.0 L581.2 439.4 L582.1 445.7 L585.6 440.9 L584.2 446.5 L585.6 451.9 L589.1 459.8 L592.6 462.9 L595.6 470.6 L599.5 473.0 L604.4 480.7 L605.4 484.2 L600.9 490.7 L595.4 493.0 L601.6 492.2 L607.9 489.9 L613.5 486.1 L614.2 483.3 L615.6 481.5 L618.3 474.5 L619.5 466.0 L620.0 458.2 L618.1 451.9 L614.2 441.7 L612.8 432.3 L610.0 427.5 L606.5 420.3 L602.3 409.1 L600.9 401.9 L600.2 396.2 L600.9 389.7 L603.7 382.4 L607.9 375.8 L608.3 373.4 L613.5 370.1 L619.0 365.1 L621.8 362.1 L628.8 357.7 L632.0 353.5 L635.1 348.5 L640.6 344.1 L648.3 343.8 L649.7 340.1 L653.2 335.9 L660.8 330.8 L667.1 330.3 L668.9 331.3 L672.0 325.7 L665.0 324.9 L669.2 319.8 L662.9 317.2 L672.0 316.4 L681.7 320.6 L683.5 314.6 L681.0 308.6 L669.2 306.1 L678.2 307.8 L678.0 298.3 L676.2 291.7 L670.6 291.3 L667.8 287.0 L671.3 286.1 L669.2 279.9 L672.0 280.8 L670.6 274.7 L671.7 272.9 L661.5 266.7 L660.8 259.6 L666.4 267.6 L671.3 271.1 L669.2 264.0 L669.2 256.0 L667.8 250.6 L675.5 246.1 L673.4 253.3 L672.7 258.7 L672.0 263.1 L676.2 269.3 L679.6 273.8 L676.9 280.8 L676.2 288.2 L677.1 287.8 L681.0 280.8 L685.2 273.8 L689.4 264.9 L688.7 258.7 L684.5 253.3 L682.4 245.2 L684.5 247.9 L688.7 251.5 L691.1 256.3 L697.7 248.8 L702.6 241.6 L704.0 233.4 L704.0 228.5 L700.5 227.9 L703.3 225.2 L704.0 223.3 L705.1 220.9 L706.8 222.4 L708.2 219.6 L710.3 218.2 L715.2 215.9 L719.3 214.1 L726.3 213.7 L731.9 213.2 L745.8 212.2 L745.8 -27.9Z M13.8 75.1 L17.3 73.0 L15.9 67.1 L11.7 61.8 L8.2 56.5 L-0.8 52.2 L-4.3 47.9 L-27.3 43.6 L-27.3 69.2 L1.2 70.2 L7.5 73.4 L13.8 75.1Z M471.4 576.3 L472.8 564.5 L474.4 555.6 L475.6 547.4 L481.1 544.1 L492.3 542.1 L502.0 539.9 L509.0 537.7 L520.1 538.4 L525.0 540.6 L525.7 546.6 L518.0 555.6 L516.0 567.4 L514.6 576.3Z M551.5 533.6 L559.1 526.4 L568.9 521.1 L577.3 517.3 L587.0 515.8 L594.0 514.0 L603.7 513.5 L612.1 515.8 L619.7 518.1 L625.3 521.9 L637.2 525.6 L646.9 527.1 L655.3 533.2 L660.8 537.7 L672.0 542.9 L680.3 545.1 L691.5 551.1 L700.5 556.3 L701.2 560.3 L687.3 563.0 L673.4 562.2 L652.5 563.7 L659.4 555.6 L649.0 551.1 L641.3 545.1 L637.8 537.7 L623.2 536.2 L614.9 533.9 L613.5 530.2 L603.7 530.9 L598.1 527.1 L590.5 528.6 L592.6 522.6 L581.4 521.9 L574.5 527.1 L564.7 529.1 L551.5 533.6Z M579.3 533.2 L584.2 533.2 L584.9 537.7 L579.3 539.9 L576.6 536.9 L579.3 533.2Z M648.3 456.6 L649.7 459.0 L640.6 462.1 L635.1 460.5 L639.9 459.0 L648.3 456.6Z M651.8 456.6 L661.5 462.1 L662.2 466.0 L659.4 472.2 L658.0 465.2 L651.8 456.6Z M645.5 483.8 L651.8 490.7 L653.9 498.3 L654.6 504.4 L645.5 498.3 L645.5 483.8Z M666.4 478.4 L674.1 486.1 L673.4 491.4 L671.3 483.0 L666.4 478.4Z M679.6 490.7 L684.5 499.1 L683.1 498.3 L679.6 490.7Z M675.5 506.0 L680.3 509.8 L676.9 509.0 L675.5 506.0Z M685.5 506.7 L690.8 515.1 L692.2 518.8 L688.0 512.0 L685.5 506.7Z M699.1 521.1 L704.0 528.6 L699.8 529.4 L699.1 521.1Z M708.2 543.6 L715.9 548.1 L708.2 546.6 L708.2 543.6Z" fill="#aad3df" stroke="#aad3df" stroke-width="7.6" stroke-linejoin="round"/>
<path d="M-34.3 -27.9 L-34.3 32.8 L-6.4 37.1 L-0.8 39.3 L3.3 44.7 L8.2 47.9 L11.7 51.1 L17.3 52.2 L18.7 46.8 L19.4 53.7 L18.0 55.4 L20.1 59.7 L24.8 60.7 L28.4 66.0 L27.0 71.3 L30.5 73.4 L29.8 77.6 L32.3 81.8 L30.5 90.0 L29.5 96.8 L25.6 100.3 L22.1 100.3 L24.9 96.2 L27.7 91.1 L22.1 94.2 L20.1 94.2 L23.5 88.0 L27.0 82.8 L24.8 79.2 L21.4 80.7 L19.8 78.0 L15.5 79.2 L8.9 78.2 L3.3 75.5 L-2.5 73.8 L-2.7 78.2 L-1.3 83.8 L2.5 91.1 L3.8 96.2 L5.1 103.4 L8.2 104.4 L5.8 104.8 L6.8 108.5 L8.9 109.5 L6.7 115.0 L7.1 117.2 L11.0 118.6 L7.8 119.0 L7.9 124.6 L7.9 132.6 L7.4 141.5 L6.5 149.9 L5.7 162.0 L4.7 168.2 L2.6 174.5 L-0.3 184.3 L1.7 192.6 L4.6 200.1 L4.7 204.8 L6.5 210.4 L5.4 217.8 L4.7 222.4 L1.8 229.0 L2.5 232.5 L6.5 236.7 L9.6 240.7 L10.0 247.9 L11.3 256.0 L16.6 262.2 L20.7 267.6 L21.2 272.9 L25.6 274.7 L28.7 276.1 L29.8 273.8 L31.2 279.9 L28.4 276.8 L28.4 281.7 L29.8 287.3 L34.0 291.1 L36.1 291.1 L38.2 293.9 L37.0 297.4 L36.2 296.9 L36.8 302.6 L42.6 308.6 L45.4 313.8 L51.1 318.9 L52.8 322.3 L54.2 326.6 L54.2 332.0 L56.7 334.2 L61.8 333.9 L67.4 335.1 L73.0 337.1 L75.8 340.1 L79.3 341.1 L84.1 341.8 L85.5 345.1 L86.9 346.5 L89.0 346.2 L92.5 348.5 L96.7 351.8 L99.5 355.2 L101.3 361.0 L101.5 363.8 L103.4 366.3 L106.1 371.7 L109.9 377.5 L109.2 379.9 L114.1 386.5 L118.3 394.6 L119.7 401.1 L121.7 408.3 L125.9 413.9 L134.3 418.7 L139.9 424.3 L144.7 429.9 L145.4 437.8 L142.6 441.7 L132.2 441.7 L136.4 447.2 L143.3 452.7 L151.7 458.2 L158.0 459.8 L166.3 466.8 L171.9 473.7 L172.6 483.0 L171.9 489.9 L177.5 493.7 L185.1 498.3 L193.5 506.0 L199.7 512.0 L203.2 518.4 L210.2 515.8 L210.2 509.0 L204.6 502.1 L198.4 499.1 L193.5 496.0 L192.8 487.6 L187.9 478.4 L183.7 470.6 L180.2 461.3 L175.4 456.6 L169.8 447.2 L164.2 440.2 L162.8 433.0 L153.8 424.3 L146.8 415.5 L140.5 408.3 L137.8 399.5 L135.4 391.3 L135.4 383.2 L135.7 378.3 L142.6 381.6 L153.1 386.5 L159.4 391.3 L160.0 399.5 L164.9 409.1 L170.5 418.7 L175.4 425.1 L183.0 433.0 L187.9 440.2 L194.2 440.9 L196.3 450.4 L203.9 456.6 L208.1 460.5 L212.3 466.0 L213.7 476.1 L223.4 481.5 L229.7 489.1 L237.4 496.8 L247.1 507.5 L252.4 513.5 L259.0 521.1 L263.1 528.6 L268.7 539.2 L268.0 546.6 L265.9 550.4 L268.7 551.8 L262.4 555.6 L266.6 564.5 L272.2 576.3 L397.6 576.3 L392.0 565.9 L385.7 557.0 L380.1 548.1 L378.1 539.2 L372.5 527.9 L372.8 518.1 L373.2 504.4 L373.9 492.2 L377.4 481.5 L381.5 471.3 L380.6 464.4 L378.3 455.1 L379.4 447.2 L379.0 443.8 L382.9 441.7 L386.4 437.0 L392.7 432.3 L398.9 428.3 L407.3 424.3 L412.5 420.3 L412.2 414.7 L414.3 411.5 L416.4 416.3 L419.8 414.7 L427.5 412.7 L435.2 411.2 L442.1 413.9 L449.1 414.7 L454.7 411.1 L457.5 414.7 L463.0 415.5 L465.8 419.5 L470.0 422.2 L478.3 421.9 L481.8 418.7 L486.7 418.4 L489.8 423.5 L495.1 420.7 L489.5 417.1 L488.1 412.3 L490.9 409.1 L486.7 405.1 L490.9 402.7 L496.5 401.4 L502.0 401.9 L507.6 403.8 L508.3 397.0 L512.5 402.7 L518.7 402.7 L520.8 399.5 L528.5 401.9 L534.1 401.1 L539.6 404.3 L544.5 408.3 L545.9 412.7 L551.5 412.0 L559.1 408.3 L563.3 406.2 L568.9 408.3 L572.4 413.9 L577.9 421.1 L582.5 425.1 L582.8 433.0 L581.2 439.4 L582.1 445.7 L585.6 440.9 L584.2 446.5 L585.6 451.9 L589.1 459.8 L592.6 462.9 L595.6 470.6 L599.5 473.0 L604.4 480.7 L605.4 484.2 L600.9 490.7 L595.4 493.0 L601.6 492.2 L607.9 489.9 L613.5 486.1 L614.2 483.3 L615.6 481.5 L618.3 474.5 L619.5 466.0 L620.0 458.2 L618.1 451.9 L614.2 441.7 L612.8 432.3 L610.0 427.5 L606.5 420.3 L602.3 409.1 L600.9 401.9 L600.2 396.2 L600.9 389.7 L603.7 382.4 L607.9 375.8 L608.3 373.4 L613.5 370.1 L619.0 365.1 L621.8 362.1 L628.8 357.7 L632.0 353.5 L635.1 348.5 L640.6 344.1 L648.3 343.8 L649.7 340.1 L653.2 335.9 L660.8 330.8 L667.1 330.3 L668.9 331.3 L672.0 325.7 L665.0 324.9 L669.2 319.8 L662.9 317.2 L672.0 316.4 L681.7 320.6 L683.5 314.6 L681.0 308.6 L669.2 306.1 L678.2 307.8 L678.0 298.3 L676.2 291.7 L670.6 291.3 L667.8 287.0 L671.3 286.1 L669.2 279.9 L672.0 280.8 L670.6 274.7 L671.7 272.9 L661.5 266.7 L660.8 259.6 L666.4 267.6 L671.3 271.1 L669.2 264.0 L669.2 256.0 L667.8 250.6 L675.5 246.1 L673.4 253.3 L672.7 258.7 L672.0 263.1 L676.2 269.3 L679.6 273.8 L676.9 280.8 L676.2 288.2 L677.1 287.8 L681.0 280.8 L685.2 273.8 L689.4 264.9 L688.7 258.7 L684.5 253.3 L682.4 245.2 L684.5 247.9 L688.7 251.5 L691.1 256.3 L697.7 248.8 L702.6 241.6 L704.0 233.4 L704.0 228.5 L700.5 227.9 L703.3 225.2 L704.0 223.3 L705.1 220.9 L706.8 222.4 L708.2 219.6 L710.3 218.2 L715.2 215.9 L719.3 214.1 L726.3 213.7 L731.9 213.2 L745.8 212.2 L745.8 -27.9Z" fill="#f2efe9"/>
<path d="M13.8 75.1 L17.3 73.0 L15.9 67.1 L11.7 61.8 L8.2 56.5 L-0.8 52.2 L-4.3 47.9 L-27.3 43.6 L-27.3 69.2 L1.2 70.2 L7.5 73.4 L13.8 75.1Z" fill="#f2efe9" stroke="#e3d9e6" stroke-width=".6"/>
<path d="M471.4 576.3 L472.8 564.5 L474.4 555.6 L475.6 547.4 L481.1 544.1 L492.3 542.1 L502.0 539.9 L509.0 537.7 L520.1 538.4 L525.0 540.6 L525.7 546.6 L518.0 555.6 L516.0 567.4 L514.6 576.3Z" fill="#f2efe9" stroke="#e3d9e6" stroke-width=".6"/>
<path d="M551.5 533.6 L559.1 526.4 L568.9 521.1 L577.3 517.3 L587.0 515.8 L594.0 514.0 L603.7 513.5 L612.1 515.8 L619.7 518.1 L625.3 521.9 L637.2 525.6 L646.9 527.1 L655.3 533.2 L660.8 537.7 L672.0 542.9 L680.3 545.1 L691.5 551.1 L700.5 556.3 L701.2 560.3 L687.3 563.0 L673.4 562.2 L652.5 563.7 L659.4 555.6 L649.0 551.1 L641.3 545.1 L637.8 537.7 L623.2 536.2 L614.9 533.9 L613.5 530.2 L603.7 530.9 L598.1 527.1 L590.5 528.6 L592.6 522.6 L581.4 521.9 L574.5 527.1 L564.7 529.1 L551.5 533.6Z" fill="#f2efe9" stroke="#e3d9e6" stroke-width=".6"/>
<path d="M579.3 533.2 L584.2 533.2 L584.9 537.7 L579.3 539.9 L576.6 536.9 L579.3 533.2Z" fill="#f2efe9" stroke="#e3d9e6" stroke-width=".6"/>
<path d="M703.6 226.4 L706.8 226.6 L712.4 226.1 L719.3 224.2 L725.6 221.5 L733.5 217.8 L729.1 217.8 L728.4 215.6 L722.8 219.6 L716.6 219.3 L711.0 220.2 L707.1 222.4 L704.0 224.2Z" fill="#f2efe9" stroke="#e3d9e6" stroke-width=".6"/>
<path d="M648.3 456.6 L649.7 459.0 L640.6 462.1 L635.1 460.5 L639.9 459.0 L648.3 456.6Z" fill="#f2efe9" stroke="#e3d9e6" stroke-width=".6"/>
<path d="M651.8 456.6 L661.5 462.1 L662.2 466.0 L659.4 472.2 L658.0 465.2 L651.8 456.6Z" fill="#f2efe9" stroke="#e3d9e6" stroke-width=".6"/>
<path d="M645.5 483.8 L651.8 490.7 L653.9 498.3 L654.6 504.4 L645.5 498.3 L645.5 483.8Z" fill="#f2efe9" stroke="#e3d9e6" stroke-width=".6"/>
<path d="M666.4 478.4 L674.1 486.1 L673.4 491.4 L671.3 483.0 L666.4 478.4Z" fill="#f2efe9" stroke="#e3d9e6" stroke-width=".6"/>
<path d="M679.6 490.7 L684.5 499.1 L683.1 498.3 L679.6 490.7Z" fill="#f2efe9" stroke="#e3d9e6" stroke-width=".6"/>
<path d="M675.5 506.0 L680.3 509.8 L676.9 509.0 L675.5 506.0Z" fill="#f2efe9" stroke="#e3d9e6" stroke-width=".6"/>
<path d="M685.5 506.7 L690.8 515.1 L692.2 518.8 L688.0 512.0 L685.5 506.7Z" fill="#f2efe9" stroke="#e3d9e6" stroke-width=".6"/>
<path d="M699.1 521.1 L704.0 528.6 L699.8 529.4 L699.1 521.1Z" fill="#f2efe9" stroke="#e3d9e6" stroke-width=".6"/>
<path d="M708.2 543.6 L715.9 548.1 L708.2 546.6 L708.2 543.6Z" fill="#f2efe9" stroke="#e3d9e6" stroke-width=".6"/>
<path d="M559.8 112.5 L556.4 113.5 L551.5 112.9 L551.5 107.1 L543.8 108.9 L537.1 109.1 L531.3 112.5 L527.8 114.2 L522.9 112.5 L517.4 111.5 L513.2 105.4 L509.0 104.4 L502.7 107.5 L504.1 102.4 L509.7 96.2 L511.8 92.7 L505.5 94.2 L500.4 97.9 L493.0 103.4 L486.0 105.8 L476.3 110.5 L468.6 110.9 L470.7 104.4 L464.4 105.4 L454.7 108.5 L451.9 107.5 L458.8 101.3 L465.8 94.2 L476.3 86.9 L484.6 82.8 L487.1 81.8 L492.3 73.4 L502.0 69.2 L506.2 61.8 L522.9 65.0 L531.3 66.7 L534.1 75.5 L539.6 82.8 L552.2 82.8 L555.7 95.2 L556.4 104.4 L559.8 112.5Z" fill="#aad3df"/>
<path d="M554.5 127.0 L550.1 130.2 L551.5 135.0 L547.0 136.2 L545.2 143.5 L542.4 147.0 L543.1 138.5 L536.2 144.1 L533.4 148.4 L532.3 157.2 L530.3 163.0 L529.5 169.7 L532.0 176.8 L533.8 185.4 L533.0 192.6 L529.9 198.2 L525.0 204.8 L519.4 207.2 L516.0 205.7 L514.6 202.4 L511.4 194.5 L511.8 188.8 L510.7 180.3 L510.8 173.6 L513.2 166.8 L513.9 160.1 L516.0 153.3 L518.7 145.4 L523.3 137.0 L518.7 142.5 L513.2 147.4 L509.0 151.3 L511.8 144.5 L514.6 140.5 L518.0 133.6 L522.2 127.6 L525.0 125.6 L527.8 129.6 L531.3 124.6 L536.9 123.6 L545.2 121.0 L550.8 122.6 L554.7 125.2Z" fill="#aad3df"/>
<path d="M586.7 181.2 L585.2 173.0 L583.8 164.9 L579.3 160.7 L574.5 163.0 L571.7 167.4 L566.5 169.3 L566.8 163.9 L571.0 161.0 L572.4 157.2 L574.0 153.3 L574.7 147.4 L572.8 141.5 L572.4 136.6 L567.2 134.2 L558.4 129.6 L554.5 127.0 L554.7 125.2 L554.7 125.2 L557.8 123.2 L564.7 123.2 L569.6 122.6 L564.7 120.6 L564.7 116.6 L571.0 117.6 L579.3 119.0 L587.0 119.6 L596.1 120.6 L599.5 123.2 L607.9 123.6 L613.5 129.6 L619.0 135.6 L621.1 141.5 L622.5 146.4 L620.7 151.3 L617.6 152.3 L613.5 150.3 L607.5 150.7 L607.2 147.4 L605.1 142.5 L597.2 137.5 L601.6 144.5 L601.2 152.3 L597.6 158.5 L596.5 166.8 L595.6 175.5 L586.7 181.2Z" fill="#aad3df"/>
<path d="M635.5 183.1 L633.7 186.5 L629.8 190.7 L623.9 195.0 L619.0 197.7 L612.1 201.0 L602.6 204.8 L596.5 209.4 L589.8 209.8 L584.2 211.3 L582.1 208.5 L578.6 209.4 L572.4 205.7 L573.8 202.0 L576.6 199.2 L585.6 201.0 L586.3 200.1 L594.0 195.4 L598.1 191.6 L603.4 187.7 L612.1 187.9 L619.0 189.8 L614.9 188.8 L618.3 185.0 L626.0 184.1 L630.9 183.7 L635.5 183.1Z" fill="#aad3df"/>
<path d="M671.6 159.5 L673.4 163.9 L673.4 170.7 L668.9 172.2 L663.6 175.5 L658.0 176.1 L653.9 176.3 L648.3 174.1 L641.3 174.1 L633.4 176.1 L627.4 177.4 L623.2 175.9 L625.3 172.6 L628.8 169.2 L633.0 165.9 L636.7 164.5 L645.9 163.0 L652.5 162.0 L659.4 164.9 L663.6 163.9 L662.9 160.1 L669.2 157.7 L671.6 159.5Z" fill="#aad3df"/>
<path d="M577.9 193.9 L580.0 192.6 L581.4 188.8 L585.3 187.9 L586.3 191.6 L584.2 194.5 L577.9 193.9Z" fill="#aad3df"/>
<path d="M588.4 -27.9 L598.1 -11.8 L612.1 6.2 L621.8 12.9 L628.8 10.7 L634.4 1.8 L639.9 -11.8 L634.4 -27.9Z" fill="#aad3df"/>
<path d="M575.9 124.6 L585.6 123.6 L594.0 123.0 L595.4 130.6 L591.2 131.6 L584.2 128.6 L575.9 126.6 L575.9 124.6Z" fill="#f2efe9"/>
<path d="M671.6 159.5 L677.5 155.2 L683.1 148.4 L693.6 142.5 L699.8 138.5 L705.4 134.6 L710.3 132.6 L715.9 122.6 L726.3 114.6 L743.0 106.4" fill="none" stroke="#aad3df" stroke-width="2"/>
<ellipse cx="167.7" cy="216.9" rx="4" ry="6" transform="rotate(20 167.7 216.9)" fill="#aad3df"/>
<ellipse cx="62.8" cy="254.2" rx="1.5" ry="2.5" transform="rotate(0 62.8 254.2)" fill="#aad3df"/>
<ellipse cx="69.5" cy="236.1" rx="1.5" ry="2.5" transform="rotate(0 69.5 236.1)" fill="#aad3df"/>
<ellipse cx="385.0" cy="19.6" rx="2.5" ry="8" transform="rotate(10 385.0 19.6)" fill="#aad3df"/>
<ellipse cx="357.2" cy="4.0" rx="2" ry="6" transform="rotate(-20 357.2 4.0)" fill="#aad3df"/>
<ellipse cx="502.0" cy="43.6" rx="6" ry="8" transform="rotate(0 502.0 43.6)" fill="#aad3df"/>
<ellipse cx="629.5" cy="153.3" rx="2.5" ry="3.5" transform="rotate(0 629.5 153.3)" fill="#aad3df"/>
<ellipse cx="609.3" cy="455.1" rx="4" ry="4.5" transform="rotate(0 609.3 455.1)" fill="#aad3df"/>
<ellipse cx="479.7" cy="405.1" rx="4.5" ry="2.5" transform="rotate(0 479.7 405.1)" fill="#aad3df"/>
<ellipse cx="713.1" cy="150.3" rx="1.5" ry="8" transform="rotate(5 713.1 150.3)" fill="#aad3df"/>
<ellipse cx="145.4" cy="82.8" rx="1.5" ry="3.5" transform="rotate(0 145.4 82.8)" fill="#aad3df"/>
<ellipse cx="412.9" cy="81.8" rx="3" ry="3" transform="rotate(0 412.9 81.8)" fill="#aad3df"/>
<ellipse cx="412.9" cy="60.7" rx="5" ry="5" transform="rotate(0 412.9 60.7)" fill="#aad3df"/>
<ellipse cx="421.2" cy="117.6" rx="2" ry="2" transform="rotate(0 421.2 117.6)" fill="#aad3df"/>
<ellipse cx="121.0" cy="353.5" rx="2" ry="3" transform="rotate(-40 121.0 353.5)" fill="#aad3df"/>
<ellipse cx="112.0" cy="75.5" rx="2" ry="2" transform="rotate(0 112.0 75.5)" fill="#aad3df"/>
<ellipse cx="36.8" cy="192.6" rx="1.5" ry="3" transform="rotate(0 36.8 192.6)" fill="#aad3df"/>
<path d="M7.5 117.6 L15.9 118.6 L21.4 120.6 L24.5 127.6 L29.8 130.6 L42.3 128.6 L47.2 130.2 L56.3 128.2 L68.8 124.2 L77.4 122.6 L106.1 122.6 M104.5 60.7 L104.5 114.2 L106.1 122.6 M106.1 122.6 L112.0 130.6 L109.2 136.6 L107.1 144.5 L102.2 153.3 L105.7 159.1 L104.6 164.9 L104.6 200.1 M4.6 200.1 L187.9 200.1 M63.2 200.1 L63.2 255.1 L138.0 324.9 M146.3 200.1 L146.3 290.4 L146.3 304.3 L137.1 307.8 L137.8 316.4 L138.0 324.9 L140.5 330.0 L144.7 336.7 L139.9 342.6 L137.1 351.8 L139.9 358.5 L136.8 363.1 M146.3 290.4 L416.8 290.4 M215.8 218.7 L215.8 386.0 M187.9 152.3 L187.9 218.7 M187.9 218.7 L313.3 218.7 M118.3 60.7 L118.3 81.8 L122.9 88.0 L123.1 93.8 L128.7 97.3 L133.6 103.4 L138.5 109.5 L141.9 109.5 L140.5 118.6 L139.9 128.6 L145.4 131.6 L149.6 132.6 L157.3 146.4 L162.8 153.3 L170.5 152.3 L181.6 151.3 L183.7 147.4 L187.9 152.3 M187.9 142.5 L285.4 142.5 M285.4 60.7 L285.4 218.7 M313.3 218.7 L313.3 290.4 M313.3 237.0 L407.3 237.0 M285.4 123.8 L389.8 123.8 M285.4 181.2 L362.7 181.2 L371.1 184.1 L380.8 186.0 L391.3 190.7 M380.4 60.7 L381.8 71.3 L383.6 83.8 L385.7 96.2 L387.1 110.5 L389.6 122.6 L385.7 130.6 L391.3 136.6 L391.3 171.7 L391.3 179.3 L391.3 190.7 L392.7 196.4 L396.2 205.7 L398.9 215.0 L399.6 224.2 L403.8 231.6 L407.3 237.0 L412.9 239.8 L410.1 246.1 L417.1 253.3 L416.8 299.1 M391.3 171.7 L464.1 171.7 M400.8 226.4 L457.0 226.1 L461.4 229.7 M300.0 290.4 L300.0 299.1 M300.0 299.1 L341.8 299.1 L341.8 332.3 L346.0 335.1 L353.0 338.4 L361.3 339.3 L368.3 344.3 L375.3 343.5 L381.5 346.0 L385.0 342.6 L389.2 344.3 L393.4 346.8 L400.3 343.5 L407.3 347.7 L418.7 349.3 M299.5 299.1 L299.2 375.0 L249.6 375.0 L250.9 378.6 M416.8 299.1 L419.4 318.1 L418.7 347.8 L424.9 349.3 L424.9 358.5 L424.9 375.0 L427.9 381.6 L431.7 388.9 L429.3 397.8 L429.6 405.9 L427.5 412.3 M416.8 299.1 L479.0 299.1 L476.0 307.8 L485.3 307.8 M424.9 358.5 L464.8 358.5 M452.6 96.2 L451.9 109.5 L449.1 109.5 L449.1 120.6 L441.4 128.6 L443.2 136.6 L442.1 147.4 L451.9 154.2 L461.6 162.0 L464.1 171.7 L465.1 179.3 L466.5 186.9 L474.9 194.5 L478.3 203.9 L471.4 210.4 L466.5 215.9 L465.8 222.4 L461.4 229.7 L460.9 238.8 L466.5 247.9 L472.8 256.9 L479.0 257.8 L478.3 262.2 L476.3 269.3 L485.3 276.4 L488.1 285.2 L493.0 290.4 L490.9 297.4 L488.1 299.1 L485.3 307.8 L481.8 315.5 L479.7 323.2 L474.2 330.0 L468.6 338.4 L465.1 348.5 L464.8 358.5 L466.5 365.1 L467.9 370.1 L462.3 378.3 L459.5 386.5 L458.8 391.3 M458.8 391.3 L484.9 391.3 L483.5 397.0 L487.4 404.3 M472.2 190.7 L511.8 190.7 M475.3 111.5 L479.7 116.6 L493.7 119.6 L497.9 122.6 L506.2 123.6 L507.6 126.6 L511.8 128.6 L511.1 135.6 L514.6 140.5 M515.5 204.6 L515.5 248.8 L515.7 256.9 L512.5 265.8 L509.0 272.9 L508.3 276.4 M493.0 290.4 L502.0 287.0 L507.6 281.7 L508.3 276.4 L514.6 274.7 L521.5 276.4 L529.9 272.9 L536.9 272.9 L541.0 267.6 L545.2 260.5 L552.9 258.7 L553.3 253.3 L559.1 254.2 L564.7 259.6 L573.1 262.2 L578.6 259.6 L580.7 262.2 L584.2 265.8 L589.8 262.2 L592.6 255.1 L596.1 255.1 L600.9 247.9 L608.6 242.5 L611.4 233.4 L613.2 225.3 M553.6 205.7 L553.3 253.3 M520.1 204.6 L553.6 204.6 L553.6 205.7 L572.4 205.2 M613.2 200.1 L613.2 242.1 L679.1 242.1 M623.8 195.0 L623.8 200.1 L685.2 200.1 L688.0 202.9 L694.3 211.3 L705.4 218.7 M694.3 211.3 L688.3 219.6 L687.3 226.1 L692.9 233.4 L688.0 237.9 L684.2 240.7 M679.1 242.1 L680.3 264.9 L689.4 264.9 M489.5 299.1 L508.3 299.1 L508.3 296.5 L569.2 297.1 L597.0 297.4 L678.0 298.3 M597.0 297.4 L591.2 306.1 L580.0 308.6 L571.7 315.5 L564.0 320.6 L560.3 324.9 M477.0 324.9 L577.3 324.9 M506.2 324.9 L507.6 326.6 L502.7 370.1 L503.1 391.3 L503.4 403.5 M542.4 324.9 L548.3 360.7 L551.5 370.1 L549.0 378.3 L550.8 391.3 L552.6 396.2 M514.6 391.3 L550.8 391.3 M514.6 391.3 L517.4 396.2 L516.7 402.7 M552.6 396.2 L589.8 398.3 L591.9 401.7 L593.3 396.2 L600.2 396.2 M577.3 324.9 L573.8 330.0 L580.7 335.1 L585.6 342.6 L593.3 350.2 L599.5 358.5 L602.3 365.9 L607.9 374.2 M577.3 324.9 L588.4 321.5 L605.8 322.3 L607.9 328.3 L625.0 328.3 L640.6 344.1 M569.2 297.4 L582.1 290.4 L588.4 285.2 L593.0 281.0 L598.1 286.1 L603.7 285.2 L613.5 283.4 L617.0 280.8 L620.4 272.9 L626.0 265.8 L631.6 262.2 L636.5 257.8 L642.7 251.5 L644.1 247.0 L652.2 249.3 M593.0 281.0 L585.6 274.7 L584.2 265.8 M627.7 242.1 L627.7 251.5 L633.7 247.0 L642.7 244.3 L645.5 242.5 L650.4 244.3 L652.2 249.3 L655.3 252.4 L660.8 256.0 L659.4 261.3 L662.2 266.7 L671.3 271.1 M713.1 142.5 L713.1 152.3 L712.4 169.7 L714.2 186.0 L711.0 199.2 L710.3 213.2 L708.2 216.9 L708.9 218.7 M711.0 199.2 L745.8 199.6 M714.2 186.0 L725.5 186.5" fill="none" stroke="#d2c3d6" stroke-width="1" stroke-linejoin="round"/>
<path d="M63.2 -27.9 L88.3 -5.0 L105.0 10.7 L124.5 26.2 L135.7 41.4 L146.0 60.7 M202.5 -27.9 L202.5 60.7 M320.2 -27.9 L322.8 60.7 M409.4 -27.9 L409.4 52.6 M627.1 -27.9 L627.1 92.1 L631.6 104.4 L638.5 118.6 L658.0 124.6 L667.8 131.6 L678.9 132.6 L697.1 130.6 L699.1 138.5 M145.4 439.4 L163.5 439.4 M135.7 366.8 L187.6 386.0 M227.5 386.0 L222.0 407.5 L219.3 431.5 L223.4 455.1 L224.8 466.0 M251.3 378.6 L280.5 415.5 M295.9 420.3 L288.9 439.4 L290.3 459.8 L281.9 470.6 M290.3 459.8 L300.0 483.0 L316.8 486.1 L327.9 466.0 L337.7 450.4 L344.6 443.3 M346.0 444.1 L343.2 470.6 L336.3 486.1 L339.0 501.4 L340.4 513.5 M347.1 444.9 L348.8 455.1 L355.8 478.4 L347.4 493.7 L346.0 509.0 L350.2 521.1 L361.3 527.1 L371.1 528.6 M224.8 466.0 L245.7 473.7 L254.1 492.2 L261.0 509.0 L262.4 519.6 M281.9 470.6 L277.8 483.0 L287.5 498.3 L281.9 513.5 L281.9 525.6 M287.5 498.3 L305.6 489.1 L319.5 495.3 L315.4 513.5 L322.3 527.1 L319.5 534.7 L304.2 534.7 L295.9 546.6 M322.3 527.1 L337.7 527.1 L355.8 537.7 L362.7 542.1 L371.1 539.2 M355.8 537.7 L344.6 549.6 L339.0 557.0 M281.9 525.6 L283.3 539.2 L281.9 548.1 L269.4 551.1 M295.9 546.6 L309.8 557.0 L293.1 564.5 M339.0 557.0 L327.9 561.5 L309.8 557.0 M339.0 557.0 L351.6 561.5 L362.7 554.1 L369.7 561.5 L375.3 554.1 M371.1 539.2 L365.5 549.6 L362.7 554.1 M516.0 542.1 L509.0 554.1 L493.7 567.4 M475.6 547.4 L481.1 554.1 L493.7 567.4" fill="none" stroke="#d9cedd" stroke-width=".8" stroke-linejoin="round"/>
<text x="50.6" y="356.0" font-size="13.5" fill="#4d4d4d" font-family="'Liberation Sans',sans-serif" stroke="#fff" stroke-opacity=".75" stroke-width="2.2" paint-order="stroke" textLength="75" lengthAdjust="spacing">Los Angeles</text><circle cx="89.0" cy="341.0" r="2.3" fill="#f5f3ee" stroke="#666"/>
<g font-family="'Liberation Sans',sans-serif">
<text x="310.4" y="299.2" font-size="14" fill="#7f6291" font-weight="normal" stroke="#fff" stroke-opacity=".75" stroke-width="2.2" paint-order="stroke" stroke-linejoin="round" textLength="91.6" lengthAdjust="spacing">United States</text>
<text x="287.2" y="514.0" font-size="13.5" fill="#7f6291" font-weight="normal" stroke="#fff" stroke-opacity=".75" stroke-width="2.2" paint-order="stroke" stroke-linejoin="round" textLength="47.4" lengthAdjust="spacing">México</text>
<text x="603.2" y="543.3" font-size="12.5" fill="#7f6291" font-weight="normal" stroke="#fff" stroke-opacity=".75" stroke-width="2.2" paint-order="stroke" stroke-linejoin="round" textLength="31.8" lengthAdjust="spacing">Cuba</text>
<text x="651.0" y="504.5" font-size="12.5" fill="#7f6291" font-weight="normal" stroke="#fff" stroke-opacity=".75" stroke-width="2.2" paint-order="stroke" stroke-linejoin="round" textLength="52.4" lengthAdjust="spacing">Bahamas</text>
<text x="148.5" y="346.5" font-size="13.5" fill="#4d4d4d" font-weight="normal" stroke="#fff" stroke-opacity=".75" stroke-width="2.2" paint-order="stroke" stroke-linejoin="round" textLength="51.1" lengthAdjust="spacing">Phoenix</text>
<circle cx="174.2" cy="351.9" r="2.3" fill="#f5f3ee" stroke="#666" stroke-width="1"/>
<text x="605.9" y="164.2" font-size="13.5" fill="#4d4d4d" font-weight="normal" stroke="#fff" stroke-opacity=".75" stroke-width="2.2" paint-order="stroke" stroke-linejoin="round" textLength="48.4" lengthAdjust="spacing">Toronto</text>
<circle cx="629.7" cy="168.9" r="2.3" fill="#f5f3ee" stroke="#666" stroke-width="1"/>
<text x="659.0" y="126.7" font-size="13.5" fill="#4d4d4d" font-weight="normal" stroke="#fff" stroke-opacity=".75" stroke-width="2.2" paint-order="stroke" stroke-linejoin="round" textLength="44.4" lengthAdjust="spacing">Ottawa</text>
<text x="675.6" y="238.7" font-size="13.5" fill="#4d4d4d" font-weight="normal" stroke="#fff" stroke-opacity=".75" stroke-width="2.2" paint-order="stroke" stroke-linejoin="round" textLength="58.4" lengthAdjust="spacing">New York</text>
<text x="624.7" y="274.7" font-size="13.5" fill="#4d4d4d" font-weight="normal" stroke="#fff" stroke-opacity=".75" stroke-width="2.2" paint-order="stroke" stroke-linejoin="round" textLength="75.0" lengthAdjust="spacing">Washington</text>
<circle cx="661.2" cy="257.0" r="2.8" fill="#f5f3ee" stroke="#666" stroke-width="1"/>
<circle cx="661.2" cy="257.0" r="1.1" fill="#555"/>
<text x="514.4" y="520.8" font-size="13.5" fill="#4d4d4d" font-weight="normal" stroke="#fff" stroke-opacity=".75" stroke-width="2.2" paint-order="stroke" stroke-linejoin="round" textLength="63.6" lengthAdjust="spacing">La Habana</text>
<circle cx="588.5" cy="515.0" r="2.8" fill="#f5f3ee" stroke="#666" stroke-width="1"/>
<circle cx="588.5" cy="515.0" r="1.1" fill="#555"/>
<text x="332.7" y="546.8" font-size="13.5" fill="#4d4d4d" font-weight="normal" stroke="#fff" stroke-opacity=".75" stroke-width="2.2" paint-order="stroke" stroke-linejoin="round" textLength="43.3" lengthAdjust="spacing">Ciudad</text>
<text x="324.8" y="563.3" font-size="13.5" fill="#4d4d4d" font-weight="normal" stroke="#fff" stroke-opacity=".75" stroke-width="2.2" paint-order="stroke" stroke-linejoin="round" textLength="60.5" lengthAdjust="spacing">de México</text>
</g>
<path d="M745.8 142.5 L694.3 142.5 L683.1 148.4 L677.5 155.2 L671.6 159.5 L673.4 163.9 L673.4 170.7 L668.9 172.2 L663.6 175.5 L658.0 176.1 L653.9 176.3 L648.3 174.1 L641.3 174.1 L633.4 176.1 L635.5 183.1 L633.7 186.5 L629.8 190.7 L623.9 195.0 L619.0 197.7 L612.1 201.0 L602.6 204.8 L596.5 209.4 L589.8 209.8 L584.2 211.3 L582.1 208.5 L578.6 209.4 L572.4 205.7 L573.8 202.0 L576.6 199.2 L577.9 193.9 L580.0 192.6 L581.4 188.8 L585.3 187.9 L586.7 181.2 L585.2 173.0 L583.8 164.9 L579.3 160.7 L574.5 163.0 L571.7 167.4 L566.5 169.3 L566.8 163.9 L571.0 161.0 L572.4 157.2 L574.0 153.3 L574.7 147.4 L572.8 141.5 L572.4 136.6 L567.2 134.2 L558.4 129.6 L554.5 127.0 L550.1 130.2 L551.5 135.0 L547.0 136.2 L545.2 143.5 L542.4 147.0 L543.1 138.5 L536.2 144.1 L533.4 148.4 L532.3 157.2 L530.3 163.0 L529.5 169.7 L532.0 176.8 L533.8 185.4 L533.0 192.6 L529.9 198.2 L525.0 204.8 L519.4 207.2 L516.0 205.7 L514.6 202.4 L511.4 194.5 L511.8 188.8 L510.7 180.3 L510.8 173.6 L513.2 166.8 L513.9 160.1 L516.0 153.3 L518.7 145.4 L523.3 137.0 L518.7 142.5 L513.2 147.4 L509.0 151.3 L511.8 144.5 L514.6 140.5 L518.0 133.6 L522.2 127.6 L525.0 125.6 L527.8 129.6 L531.3 124.6 L536.9 123.6 L545.2 121.0 L550.8 122.6 L554.7 125.2 L557.8 123.2 L564.7 123.2 L569.6 122.6 L564.7 120.6 L562.6 116.6 L559.8 112.5 L556.4 113.5 L551.5 112.9 L551.5 107.1 L543.8 108.9 L537.1 109.1 L531.3 112.5 L527.8 114.2 L522.9 112.5 L517.4 111.5 L513.2 105.4 L509.0 104.4 L502.7 107.5 L504.1 102.4 L509.7 96.2 L511.8 92.7 L505.5 94.2 L500.4 97.9 L493.0 103.4 L486.0 105.8 L476.3 110.5 L468.6 110.9 L470.7 104.4 L464.4 105.4 L454.7 108.5 L451.9 107.5 L458.8 101.3 L465.8 94.2 L476.3 86.9 L484.6 82.8 L487.1 81.8 L481.1 79.7 L470.0 79.7 L461.6 80.7 L454.7 76.5 L449.1 74.4 L443.5 71.3 L433.8 68.8 L425.4 67.1 L417.1 66.7 L415.7 62.8 L414.0 54.3 L409.4 52.6 L409.4 60.7 L24.8 60.7 L28.4 66.0 L27.0 71.3 L30.5 73.4 L29.8 77.6 L32.3 81.8 L30.5 90.0 L29.5 96.8 L25.6 100.3 L22.1 100.3 L24.9 96.2 L27.7 91.1 L22.1 94.2 L20.1 94.2 L23.5 88.0 L27.0 82.8 L24.8 79.2 L21.4 80.7 L19.8 78.0 L15.5 79.2 L8.9 78.2 L3.3 75.5 L-2.5 73.8 L-2.7 78.2 L-1.3 83.8 L2.5 91.1 L3.8 96.2 L5.1 103.4 L8.2 104.4 L5.8 104.8 L6.8 108.5 L8.9 109.5 L6.7 115.0 L7.1 117.2 L11.0 118.6 L7.8 119.0 L7.9 124.6 L7.9 132.6 L7.4 141.5 L6.5 149.9 L5.7 162.0 L4.7 168.2 L2.6 174.5 L-0.3 184.3 L1.7 192.6 L4.6 200.1 L4.7 204.8 L6.5 210.4 L5.4 217.8 L4.7 222.4 L1.8 229.0 L2.5 232.5 L6.5 236.7 L9.6 240.7 L10.0 247.9 L11.3 256.0 L16.6 262.2 L20.7 267.6 L21.2 272.9 L25.6 274.7 L28.7 276.1 L29.8 273.8 L31.2 279.9 L28.4 276.8 L28.4 281.7 L29.8 287.3 L34.0 291.1 L36.1 291.1 L38.2 293.9 L37.0 297.4 L36.2 296.9 L36.8 302.6 L42.6 308.6 L45.4 313.8 L51.1 318.9 L52.8 322.3 L54.2 326.6 L54.2 332.0 L56.7 334.2 L61.8 333.9 L67.4 335.1 L73.0 337.1 L75.8 340.1 L79.3 341.1 L84.1 341.8 L85.5 345.1 L86.9 346.5 L89.0 346.2 L92.5 348.5 L96.7 351.8 L99.5 355.2 L101.3 361.0 L101.5 363.8 L103.4 366.3 L136.8 363.1 L135.5 366.9 L187.6 386.0 L227.5 386.0 L227.5 378.6 L250.9 378.6 L255.2 383.7 L263.1 389.7 L266.9 393.8 L272.5 397.3 L274.7 401.9 L276.4 407.5 L278.9 413.1 L280.5 414.7 L284.7 418.3 L290.3 420.7 L295.9 423.8 L298.7 423.5 L300.5 420.7 L302.4 417.1 L304.5 411.5 L308.4 410.7 L314.0 411.1 L322.3 411.1 L326.5 415.5 L329.3 418.3 L332.4 421.9 L334.9 428.3 L338.4 436.2 L342.5 440.2 L348.5 446.5 L348.8 450.4 L351.6 456.6 L353.7 462.1 L354.7 464.4 L361.3 467.1 L366.9 469.9 L373.9 469.9 L377.4 473.0 L381.5 471.3 L380.6 464.4 L378.3 455.1 L379.4 447.2 L379.0 443.8 L382.9 441.7 L386.4 437.0 L392.7 432.3 L398.9 428.3 L407.3 424.3 L412.5 420.3 L412.2 414.7 L414.3 411.5 L416.4 416.3 L419.8 414.7 L427.5 412.7 L435.2 411.2 L442.1 413.9 L449.1 414.7 L454.7 411.1 L457.5 414.7 L463.0 415.5 L465.8 419.5 L470.0 422.2 L478.3 421.9 L481.8 418.7 L486.7 418.4 L489.8 423.5 L495.1 420.7 L489.5 417.1 L488.1 412.3 L490.9 409.1 L486.7 405.1 L490.9 402.7 L496.5 401.4 L502.0 401.9 L507.6 403.8 L508.3 397.0 L512.5 402.7 L518.7 402.7 L520.8 399.5 L528.5 401.9 L534.1 401.1 L539.6 404.3 L544.5 408.3 L545.9 412.7 L551.5 412.0 L559.1 408.3 L563.3 406.2 L568.9 408.3 L572.4 413.9 L577.9 421.1 L582.5 425.1 L582.8 433.0 L581.2 439.4 L582.1 445.7 L585.6 440.9 L584.2 446.5 L585.6 451.9 L589.1 459.8 L592.6 462.9 L595.6 470.6 L599.5 473.0 L604.4 480.7 L605.4 484.2 L600.9 490.7 L595.4 493.0 L601.6 492.2 L607.9 489.9 L613.5 486.1 L614.2 483.3 L615.6 481.5 L618.3 474.5 L619.5 466.0 L620.0 458.2 L618.1 451.9 L614.2 441.7 L612.8 432.3 L610.0 427.5 L606.5 420.3 L602.3 409.1 L600.9 401.9 L600.2 396.2 L600.9 389.7 L603.7 382.4 L607.9 375.8 L608.3 373.4 L613.5 370.1 L619.0 365.1 L621.8 362.1 L628.8 357.7 L632.0 353.5 L635.1 348.5 L640.6 344.1 L648.3 343.8 L649.7 340.1 L653.2 335.9 L660.8 330.8 L667.1 330.3 L668.9 331.3 L672.0 325.7 L665.0 324.9 L669.2 319.8 L662.9 317.2 L672.0 316.4 L681.7 320.6 L683.5 314.6 L681.0 308.6 L669.2 306.1 L678.2 307.8 L678.0 298.3 L676.2 291.7 L670.6 291.3 L667.8 287.0 L671.3 286.1 L669.2 279.9 L672.0 280.8 L670.6 274.7 L671.7 272.9 L661.5 266.7 L660.8 259.6 L666.4 267.6 L671.3 271.1 L669.2 264.0 L669.2 256.0 L667.8 250.6 L675.5 246.1 L673.4 253.3 L672.7 258.7 L672.0 263.1 L676.2 269.3 L679.6 273.8 L676.9 280.8 L676.2 288.2 L677.1 287.8 L681.0 280.8 L685.2 273.8 L689.4 264.9 L688.7 258.7 L684.5 253.3 L682.4 245.2 L684.5 247.9 L688.7 251.5 L691.1 256.3 L697.7 248.8 L702.6 241.6 L704.0 233.4 L704.0 228.5 L700.5 227.9 L703.3 225.2 L704.0 223.3 L705.1 220.9 L706.8 222.4 L708.2 219.6 L710.3 218.2 L715.2 215.9 L719.3 214.1 L726.3 213.7 L731.9 213.2 L745.8 212.2Z" fill="none" stroke="#000" stroke-width="5.2" stroke-linejoin="round"/>
<path d="M703.6 226.4 L706.8 226.6 L712.4 226.1 L719.3 224.2 L725.6 221.5 L733.5 217.8 L729.1 217.8 L728.4 215.6 L722.8 219.6 L716.6 219.3 L711.0 220.2 L707.1 222.4 L704.0 224.2Z" fill="none" stroke="#000" stroke-width="4.6" stroke-linejoin="round"/>
<path d="M26.0 73.4 L24.9 77.6 L28.4 82.8 L29.8 80.7 L27.7 75.5 L26.0 73.4Z" fill="#000" stroke="#000" stroke-width="3" stroke-linejoin="round"/>
<path d="M21.4 67.1 L19.4 71.3 L22.8 72.3 L24.2 69.2 L21.4 67.1Z" fill="#000" stroke="#000" stroke-width="3" stroke-linejoin="round"/>
<path d="M28.4 92.1 L28.4 95.2 L29.5 94.2 L28.4 92.1Z" fill="#000" stroke="#000" stroke-width="3" stroke-linejoin="round"/>
<path d="M27.7 88.0 L27.3 90.0 L28.4 89.6 L27.7 88.0Z" fill="#000" stroke="#000" stroke-width="3" stroke-linejoin="round"/>
<path d="M56.5 340.0 L61.0 338.0 L71.0 338.8 L75.5 340.5 L73.0 343.5 L67.0 344.5 L62.0 345.3 L58.0 344.0 Z" fill="#000" stroke="#000" stroke-width="2.4" stroke-linejoin="round"/>
<path d="M68.0 353.0 L73.0 351.0 L78.0 347.8 L79.5 349.0 L75.0 354.5 L70.0 356.3 Z" fill="#000" stroke="#000" stroke-width="2.4" stroke-linejoin="round"/>
<path d="M82.8 350.2 L86.0 349.3 L88.8 352.5 L87.0 354.3 L83.8 353.3 Z" fill="#000" stroke="#000" stroke-width="2.4" stroke-linejoin="round"/>
<path d="M81.8 357.2 L85.0 356.3 L88.2 361.0 L87.0 363.8 L83.8 362.3 Z" fill="#000" stroke="#000" stroke-width="2.4" stroke-linejoin="round"/>
<path d="M27.5 270.0 L31.0 269.0 L34.5 271.0 L35.0 276.0 L37.0 281.0 L34.0 284.0 L30.5 283.0 L29.0 278.0 Z" fill="#000" stroke="#000" stroke-width="2.4" stroke-linejoin="round"/>
<path d="M484.0 406.0 L490.0 400.5 L498.0 399.0 L501.0 402.0 L497.0 407.0 L499.0 413.0 L495.0 416.0 L499.0 422.0 L496.0 425.0 L490.0 422.0 L488.0 416.0 L485.0 411.0 Z" fill="#000" stroke="#000" stroke-width="2.4" stroke-linejoin="round"/>
<path d="M508.0 395.5 L513.0 395.5 L513.0 401.0 L508.0 401.0 Z" fill="#000" stroke="#000" stroke-width="2.4" stroke-linejoin="round"/>
<path d="M410.0 411.0 L415.0 410.0 L417.0 415.0 L411.0 418.0 Z" fill="#000" stroke="#000" stroke-width="2.4" stroke-linejoin="round"/>
<path d="M451.0 409.0 L458.0 408.0 L460.0 414.0 L453.0 416.0 Z" fill="#000" stroke="#000" stroke-width="2.4" stroke-linejoin="round"/>
<path d="M471.0 418.0 L479.0 417.0 L481.0 423.0 L473.0 424.0 Z" fill="#000" stroke="#000" stroke-width="2.4" stroke-linejoin="round"/>
<path d="M376.0 439.0 L382.0 434.0 L385.0 439.0 L381.0 447.0 L382.0 457.0 L377.5 457.0 L375.0 449.0 Z" fill="#000" stroke="#000" stroke-width="2.4" stroke-linejoin="round"/>
<path d="M671.0 242.0 L677.0 241.5 L680.0 245.0 L681.0 252.0 L683.0 259.0 L686.0 264.0 L688.0 269.0 L685.0 277.0 L682.0 285.0 L680.5 293.0 L675.0 295.0 L669.0 293.0 L662.0 289.0 L663.0 285.0 L668.0 283.0 L664.0 279.0 L666.0 275.0 L661.0 269.0 L657.5 261.0 L658.0 258.0 L663.0 260.0 L667.0 264.0 L668.0 257.0 L667.0 249.0 Z" fill="#000" stroke="#000" stroke-width="2.4" stroke-linejoin="round"/>
<path d="M671.0 301.0 L677.0 300.0 L681.0 305.0 L685.0 313.0 L687.0 322.0 L685.0 329.0 L677.0 332.0 L670.0 332.0 L665.0 329.0 L661.0 325.0 L663.0 321.0 L668.0 322.0 L662.0 317.0 L664.0 313.0 L670.0 315.0 L667.0 309.0 L669.0 305.0 Z" fill="#000" stroke="#000" stroke-width="2.4" stroke-linejoin="round"/>
<path d="M701.0 225.0 L704.0 217.0 L711.0 212.0 L726.0 208.0 L726.0 220.0 L715.0 223.0 L707.0 227.0 Z" fill="#000" stroke="#000" stroke-width="2.4" stroke-linejoin="round"/>
<path d="M490.5 83.5 L497.0 79.5 L505.5 75.8 L506.5 78.0 L499.0 82.0 L491.5 85.8 Z" fill="#000" stroke="#000" stroke-width="2.4" stroke-linejoin="round"/>
<path d="M466.0 99.0 L472.0 97.5 L474.0 101.0 L469.0 103.5 Z" fill="#000" stroke="#000" stroke-width="2.4" stroke-linejoin="round"/>
<path d="M536.0 141.0 L540.0 129.0 L546.0 125.0 L555.0 126.0 L555.0 133.0 L550.0 136.0 L548.0 146.0 L542.0 148.0 L540.0 141.0 Z" fill="#000" stroke="#000" stroke-width="2.4" stroke-linejoin="round"/>
<path d="M550.0 110.0 L557.0 114.0 L563.0 109.0 L567.0 117.0 L574.0 119.0 L574.0 125.0 L565.0 126.0 L557.0 122.0 L550.0 120.0 Z" fill="#000" stroke="#000" stroke-width="2.4" stroke-linejoin="round"/>
<path d="M508.0 149.0 L513.0 139.0 L521.0 127.0 L527.0 124.0 L530.0 127.0 L523.0 137.0 L517.0 149.0 L513.0 153.0 Z" fill="#000" stroke="#000" stroke-width="2.4" stroke-linejoin="round"/>
<path d="M582.0 437.0 L587.0 436.0 L589.0 442.0 L585.0 445.0 L582.0 442.0 Z" fill="#000" stroke="#000" stroke-width="2.4" stroke-linejoin="round"/>
<path d="M507.0 396.0 L512.0 395.0 L513.0 401.0 L508.0 402.0 Z" fill="#000" stroke="#000" stroke-width="2.4" stroke-linejoin="round"/>
</svg>
<div style="position:absolute;left:1225px;top:325px;width:524px;height:54px;border-radius:11px;background:#fff"></div>
<span class="t" style="left:1239.60px;top:351.47px;font-size:20px;color:#2d50bd;font-weight:normal;font-family:'Liberation Sans', sans-serif;letter-spacing:-0.182px;">Please Click On</span>
<svg class="ic" style="left:1382.2px;top:332.9px" width="36" height="36" viewBox="0 0 24 24" fill="#2d50bd" ><path d="M15.5 14h-.79l-.28-.27C15.41 12.59 16 11.11 16 9.5 16 5.91 13.09 3 9.5 3S3 5.91 3 9.5 5.91 16 9.5 16c1.61 0 3.09-.59 4.23-1.57l.27.28v.79l5 4.99L20.49 19l-4.99-5zm-6 0C7.01 14 5 11.99 5 9.5S7.01 5 9.5 5 14 7.01 14 9.5 11.99 14 9.5 14zM12 10h-2v2H9v-2H7V9h2V7h1v2h2v1z"/></svg>
<span class="t" style="left:1422.70px;top:351.47px;font-size:20px;color:#2d50bd;font-weight:normal;font-family:'Liberation Sans', sans-serif;letter-spacing:-0.059px;">Action On Data Table To View Data</span>
<div style="position:absolute;left:1827px;top:325px;width:64.5px;height:135px;border-radius:11px;background:#fff"></div>
<svg class="ic" style="left:1841.7px;top:332.7px" width="36" height="36" viewBox="0 0 24 24" fill="#2d50bd" ><path d="M17 15h2V7c0-1.1-.9-2-2-2H9v2h8v8zM7 17V1H5v4H1v2h4v10c0 1.1.9 2 2 2h10v4h2v-4h4v-2H7z"/></svg>
<svg class="ic" style="left:1841.7px;top:381px" width="36" height="36" viewBox="0 0 24 24" fill="#d9534f" ><path d="M6 19c0 1.1.9 2 2 2h8c1.1 0 2-.9 2-2V7H6v12zM19 4h-3.5l-1-1h-5l-1 1H5v2h14V4z"/></svg>
<svg class="ic" style="left:1842.5px;top:417.2px" width="36" height="36" viewBox="0 0 24 24" fill="#2d50bd" ><path d="M13 3c-4.97 0-9 4.03-9 9H1l3.89 3.89.07.14L9 12H6c0-3.87 3.13-7 7-7s7 3.13 7 7-3.13 7-7 7c-1.93 0-3.68-.79-4.94-2.06l-1.42 1.42C8.27 19.99 10.51 21 13 21c4.97 0 9-4.03 9-9s-4.03-9-9-9zm-1 5v5l4.28 2.54.72-1.21-3.5-2.08V8H12z"/></svg>
<svg class="ic" style="left:1209.1px;top:774.6px" width="35.4" height="35.4" viewBox="0 0 24 24" fill="#000" ><path d="M12 2C6.48 2 2 6.48 2 12s4.48 10 10 10 10-4.48 10-10S17.52 2 12 2zm1 15h-2v-6h2v6zm0-8h-2V7h2v2z"/></svg>
<div style="position:absolute;left:1224px;top:783px;width:6px;height:19px;background:#fff;z-index:0"></div>
<svg class="ic" style="left:1212px;top:777.5px" width="29.5" height="29.5" viewBox="0 0 29.5 29.5"><circle cx="14.75" cy="14.75" r="14.75" fill="#000"/><rect x="13" y="12.6" width="3.5" height="9.5" fill="#fff"/><rect x="13" y="7.3" width="3.5" height="3.5" fill="#fff"/></svg>
<svg class="ic" style="left:1740px;top:715px" width="180" height="160" viewBox="1740 715 180 160">
<defs><path id="arc" d="M 1779.8 810.3 A 65 65 0 0 1 1901.1 784.5"/></defs>
<g font-family="'Liberation Sans',sans-serif" font-weight="bold" font-style="italic" font-size="28.5">
<text fill="#36a3ad" stroke="#36a3ad" stroke-width="5" stroke-linejoin="round" transform="translate(0.6,1.6)"><textPath href="#arc" textLength="162.5" lengthAdjust="spacing">We Are Here!</textPath></text>
<text fill="#fff" stroke="#36a3ad" stroke-width="2.6" paint-order="stroke" stroke-linejoin="round"><textPath href="#arc" textLength="162.5" lengthAdjust="spacing">We Are Here!</textPath></text>
</g>
<circle cx="1842" cy="814.8" r="43.8" fill="#436cc4"/>
<circle cx="1841.3" cy="813.4" r="20.5" fill="#fff"/><path d="M1829.5 829 L1834 838 L1846 833.5 Z" fill="#fff"/>
<path d="M1839.4 822.9 h14.8 a7.4 5.1 0 0 1 -14.8 0z" fill="#436cc4"/>
<circle cx="1871.5" cy="785.7" r="14.7" fill="#b91616"/>
<text x="1871.5" y="791.8" font-size="17" fill="#fff" text-anchor="middle" font-family="'Liberation Sans',sans-serif">1</text>
<path d="M1756 811.2 Q1752.500 811.500 1750.500 814.500 Q1748.500 817 1749.200 820.500 Q1748.500 824 1750.300 827.500 Q1751.500 830.500 1756 833.500 L1768 840.300 Q1774 843 1779 841.500 Q1784.500 838.500 1785 832 Q1784 827 1780.500 822.500 L1776.200 814 Q1774.500 810.800 1772.300 812.500 Q1770.800 815.500 1771.200 821.300 Z" fill="#fdd12a"/>
<path d="M1745.500 829.500 Q1748 835 1753 837.200 M1740.500 832 Q1744 839.500 1750.500 841.500" stroke="#fdd12a" stroke-width="1.3" fill="none" stroke-linecap="round"/>
</svg></body></html>
